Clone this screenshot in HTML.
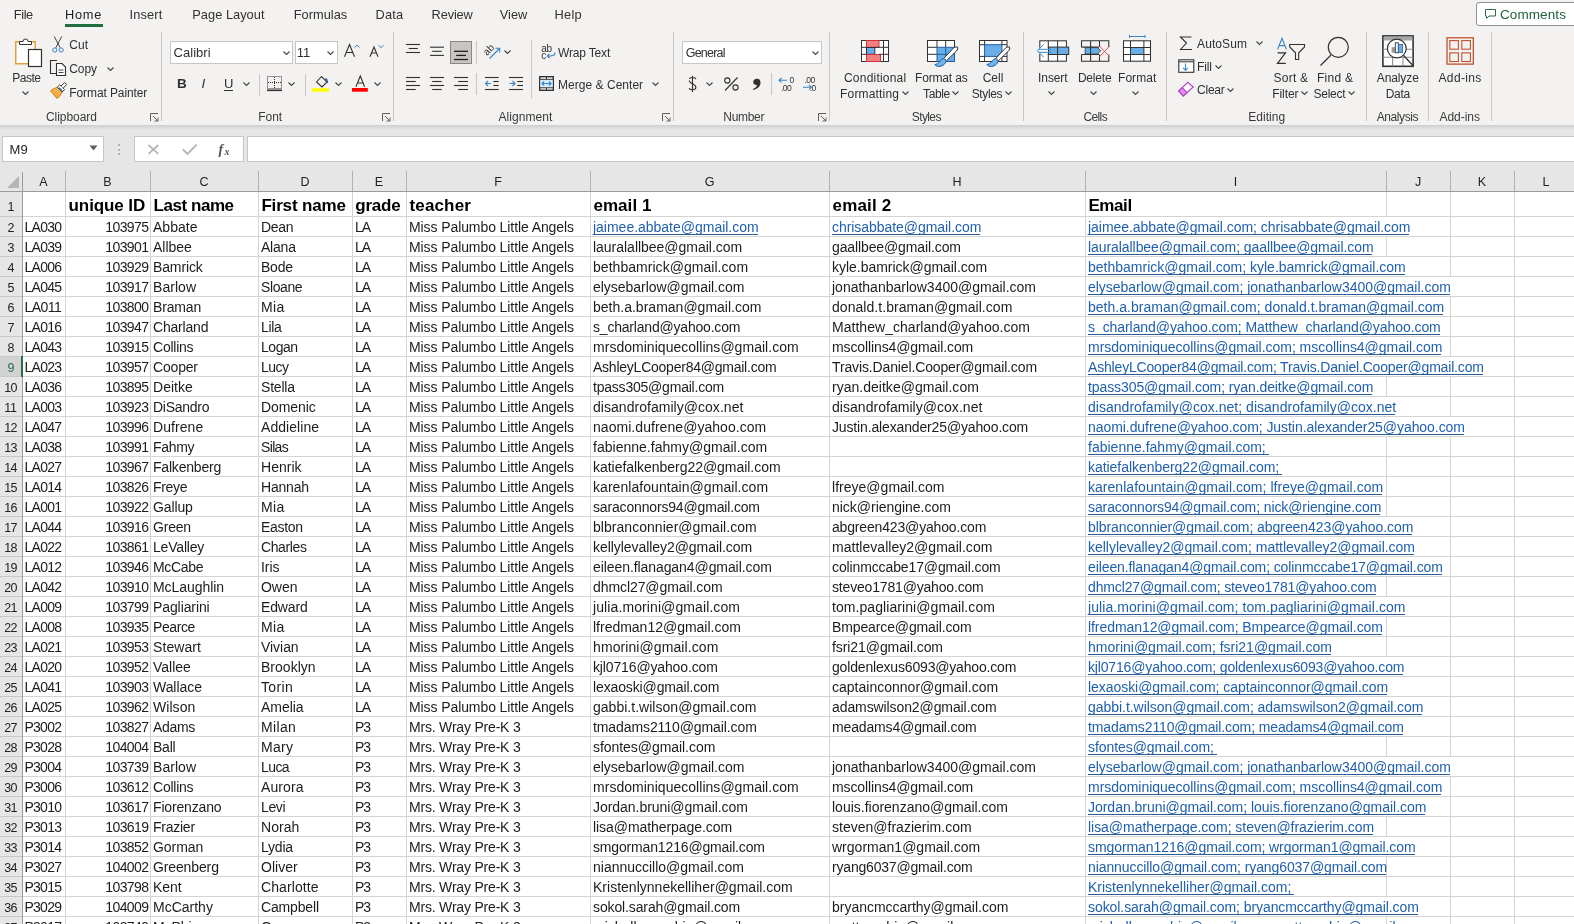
<!DOCTYPE html><html><head><meta charset="utf-8"><style>
html,body{margin:0;padding:0}
body{width:1574px;height:924px;overflow:hidden;position:relative;background:#fff;font-family:"Liberation Sans",sans-serif}
.t{position:absolute;white-space:nowrap}
.b{position:absolute}
svg.b{overflow:visible}
#wrap{position:absolute;left:0;top:0;width:1574px;height:924px;will-change:transform}
</style></head><body><div id="wrap">
<div class="b" style="left:0.00px;top:0.00px;width:1574.00px;height:125.00px;background:#f3f2f1;"></div>
<div class="t" style="left:13.70px;top:9.00px;font-size:12.80px;line-height:12.80px;color:#323130;letter-spacing:-0.356px;">File</div>
<div class="t" style="left:64.90px;top:9.00px;font-size:12.80px;line-height:12.80px;color:#1f1f1f;letter-spacing:0.764px;">Home</div>
<div class="t" style="left:129.50px;top:9.00px;font-size:12.80px;line-height:12.80px;color:#323130;letter-spacing:0.165px;">Insert</div>
<div class="t" style="left:192.30px;top:9.00px;font-size:12.80px;line-height:12.80px;color:#323130;letter-spacing:0.029px;">Page Layout</div>
<div class="t" style="left:293.70px;top:9.00px;font-size:12.80px;line-height:12.80px;color:#323130;letter-spacing:0.033px;">Formulas</div>
<div class="t" style="left:375.60px;top:9.00px;font-size:12.80px;line-height:12.80px;color:#323130;letter-spacing:0.166px;">Data</div>
<div class="t" style="left:431.60px;top:9.00px;font-size:12.80px;line-height:12.80px;color:#323130;letter-spacing:-0.145px;">Review</div>
<div class="t" style="left:499.70px;top:9.00px;font-size:12.80px;line-height:12.80px;color:#323130;letter-spacing:0.047px;">View</div>
<div class="t" style="left:554.40px;top:9.00px;font-size:12.80px;line-height:12.80px;color:#323130;letter-spacing:0.319px;">Help</div>
<div class="b" style="left:65.00px;top:24.00px;width:38.00px;height:3.00px;background:#1e6e42;"></div>
<div class="b" style="left:1476px;top:2px;width:110px;height:24px;box-sizing:border-box;border:1px solid #8f8f8f;border-radius:3px;background:#fff"></div>
<svg class="b" style="left:1484px;top:8px" width="13" height="12"><path d="M1.5,1.5 H11.5 V8 H5 L2.5,10.5 V8 H1.5 Z" fill="none" stroke="#2c6a48" stroke-width="1"/></svg>
<div class="t" style="left:1500.00px;top:8.00px;font-size:13.50px;line-height:13.50px;color:#22603e;letter-spacing:0.092px;">Comments</div>
<div class="b" style="left:161.00px;top:32.00px;width:1.00px;height:89.00px;background:#c8c6c4;"></div>
<div class="b" style="left:393.00px;top:32.00px;width:1.00px;height:89.00px;background:#c8c6c4;"></div>
<div class="b" style="left:673.00px;top:32.00px;width:1.00px;height:89.00px;background:#c8c6c4;"></div>
<div class="b" style="left:829.00px;top:32.00px;width:1.00px;height:89.00px;background:#c8c6c4;"></div>
<div class="b" style="left:1023.00px;top:32.00px;width:1.00px;height:89.00px;background:#c8c6c4;"></div>
<div class="b" style="left:1166.00px;top:32.00px;width:1.00px;height:89.00px;background:#c8c6c4;"></div>
<div class="b" style="left:1366.00px;top:32.00px;width:1.00px;height:89.00px;background:#c8c6c4;"></div>
<div class="b" style="left:1428.00px;top:32.00px;width:1.00px;height:89.00px;background:#c8c6c4;"></div>
<div class="b" style="left:1491.00px;top:32.00px;width:1.00px;height:89.00px;background:#c8c6c4;"></div>
<div class="t" style="left:46.00px;top:111.00px;font-size:12.00px;line-height:12.00px;color:#3b3a39;letter-spacing:-0.062px;">Clipboard</div>
<div class="t" style="left:258.20px;top:111.00px;font-size:12.00px;line-height:12.00px;color:#3b3a39;letter-spacing:-0.027px;">Font</div>
<div class="t" style="left:498.50px;top:111.00px;font-size:12.00px;line-height:12.00px;color:#3b3a39;letter-spacing:0.049px;">Alignment</div>
<div class="t" style="left:723.30px;top:111.00px;font-size:12.00px;line-height:12.00px;color:#3b3a39;letter-spacing:-0.296px;">Number</div>
<div class="t" style="left:911.80px;top:111.00px;font-size:12.00px;line-height:12.00px;color:#3b3a39;letter-spacing:-0.613px;">Styles</div>
<div class="t" style="left:1083.40px;top:111.00px;font-size:12.00px;line-height:12.00px;color:#3b3a39;letter-spacing:-0.594px;">Cells</div>
<div class="t" style="left:1248.20px;top:111.00px;font-size:12.00px;line-height:12.00px;color:#3b3a39;letter-spacing:0.044px;">Editing</div>
<div class="t" style="left:1376.80px;top:111.00px;font-size:12.00px;line-height:12.00px;color:#3b3a39;letter-spacing:-0.435px;">Analysis</div>
<div class="t" style="left:1439.50px;top:111.00px;font-size:12.00px;line-height:12.00px;color:#3b3a39;letter-spacing:-0.041px;">Add-ins</div>
<svg class="b" style="left:150px;top:113px" width="9" height="9"><path d="M0.5,8 V0.5 H8 M3,3 L8,8 M8,4.5 V8 H4.5" fill="none" stroke="#605e5c" stroke-width="1"/></svg>
<svg class="b" style="left:382px;top:113px" width="9" height="9"><path d="M0.5,8 V0.5 H8 M3,3 L8,8 M8,4.5 V8 H4.5" fill="none" stroke="#605e5c" stroke-width="1"/></svg>
<svg class="b" style="left:662px;top:113px" width="9" height="9"><path d="M0.5,8 V0.5 H8 M3,3 L8,8 M8,4.5 V8 H4.5" fill="none" stroke="#605e5c" stroke-width="1"/></svg>
<svg class="b" style="left:818px;top:113px" width="9" height="9"><path d="M0.5,8 V0.5 H8 M3,3 L8,8 M8,4.5 V8 H4.5" fill="none" stroke="#605e5c" stroke-width="1"/></svg>
<div class="t" style="left:12.30px;top:72.00px;font-size:12.00px;line-height:12.00px;color:#303030;letter-spacing:-0.497px;">Paste</div>
<div class="t" style="left:69.30px;top:39.00px;font-size:12.00px;line-height:12.00px;color:#303030;letter-spacing:0.076px;">Cut</div>
<div class="t" style="left:69.30px;top:63.00px;font-size:12.00px;line-height:12.00px;color:#303030;letter-spacing:-0.128px;">Copy</div>
<div class="t" style="left:69.30px;top:87.00px;font-size:12.00px;line-height:12.00px;color:#303030;letter-spacing:-0.104px;">Format Painter</div>
<svg class="b" style="left:21.5px;top:91.0px" width="8" height="5"><polyline points="0.5,0.5 3.5,3.5 6.5,0.5" fill="none" stroke="#444" stroke-width="1.1"/></svg>
<svg class="b" style="left:106.5px;top:66.5px" width="8" height="5"><polyline points="0.5,0.5 3.5,3.5 6.5,0.5" fill="none" stroke="#444" stroke-width="1.1"/></svg>
<div class="b" style="left:170.00px;top:41.00px;width:123.00px;height:23.00px;background:#fff;box-sizing:border-box;border:1px solid #c8c6c4;"></div>
<div class="t" style="left:173.60px;top:46.00px;font-size:13.00px;line-height:13.00px;color:#303030;letter-spacing:0.023px;">Calibri</div>
<svg class="b" style="left:282.5px;top:50.5px" width="8" height="5"><polyline points="0.5,0.5 3.5,3.5 6.5,0.5" fill="none" stroke="#444" stroke-width="1.1"/></svg>
<div class="b" style="left:295.00px;top:41.00px;width:43.00px;height:23.00px;background:#fff;box-sizing:border-box;border:1px solid #c8c6c4;"></div>
<div class="t" style="left:296.80px;top:46.00px;font-size:13.00px;line-height:13.00px;color:#303030;letter-spacing:-0.147px;">11</div>
<svg class="b" style="left:327.0px;top:50.5px" width="8" height="5"><polyline points="0.5,0.5 3.5,3.5 6.5,0.5" fill="none" stroke="#444" stroke-width="1.1"/></svg>
<div class="t" style="left:177.00px;top:77.00px;font-size:13.50px;line-height:13.50px;color:#303030;font-weight:bold;">B</div>
<div class="t" style="left:201.50px;top:77.00px;font-size:13.50px;line-height:13.50px;color:#303030;font-style:italic;font-family:"Liberation Serif",serif;">I</div>
<div class="t" style="left:224.00px;top:77.00px;font-size:13.00px;line-height:13.00px;color:#303030;">U</div>
<div class="b" style="left:224.00px;top:89.50px;width:9.00px;height:1.00px;background:#303030;"></div>
<svg class="b" style="left:242.7px;top:82.0px" width="8" height="5"><polyline points="0.5,0.5 3.5,3.5 6.5,0.5" fill="none" stroke="#444" stroke-width="1.1"/></svg>
<div class="b" style="left:259.00px;top:74.00px;width:1.00px;height:22.00px;background:#c8c6c4;"></div>
<div class="b" style="left:305.00px;top:74.00px;width:1.00px;height:22.00px;background:#c8c6c4;"></div>
<svg class="b" style="left:288.2px;top:82.0px" width="8" height="5"><polyline points="0.5,0.5 3.5,3.5 6.5,0.5" fill="none" stroke="#444" stroke-width="1.1"/></svg>
<svg class="b" style="left:334.7px;top:82.0px" width="8" height="5"><polyline points="0.5,0.5 3.5,3.5 6.5,0.5" fill="none" stroke="#444" stroke-width="1.1"/></svg>
<svg class="b" style="left:373.6px;top:82.0px" width="8" height="5"><polyline points="0.5,0.5 3.5,3.5 6.5,0.5" fill="none" stroke="#444" stroke-width="1.1"/></svg>
<div class="t" style="left:0.00px;top:-101.00px;font-size:1.00px;line-height:1.00px;color:#262626;">Number</div>
<div class="b" style="left:450.00px;top:41.00px;width:22.00px;height:23.00px;background:#c8c6c4;box-sizing:border-box;border:1px solid #8a8886;"></div>
<div class="b" style="left:476.00px;top:41.00px;width:1.00px;height:23.00px;background:#c8c6c4;"></div>
<div class="b" style="left:476.00px;top:73.00px;width:1.00px;height:22.00px;background:#c8c6c4;"></div>
<div class="b" style="left:531.00px;top:40.00px;width:1.00px;height:58.00px;background:#c8c6c4;"></div>
<div class="t" style="left:558.10px;top:47.00px;font-size:12.00px;line-height:12.00px;color:#303030;letter-spacing:-0.175px;">Wrap Text</div>
<div class="t" style="left:558.10px;top:79.00px;font-size:12.00px;line-height:12.00px;color:#303030;letter-spacing:0.022px;">Merge &amp; Center</div>
<svg class="b" style="left:652.4px;top:82.0px" width="8" height="5"><polyline points="0.5,0.5 3.5,3.5 6.5,0.5" fill="none" stroke="#444" stroke-width="1.1"/></svg>
<svg class="b" style="left:504.0px;top:50.0px" width="8" height="5"><polyline points="0.5,0.5 3.5,3.5 6.5,0.5" fill="none" stroke="#444" stroke-width="1.1"/></svg>
<div class="b" style="left:682.00px;top:41.00px;width:140.00px;height:23.00px;background:#fff;box-sizing:border-box;border:1px solid #c8c6c4;"></div>
<div class="t" style="left:685.70px;top:47.00px;font-size:12.50px;line-height:12.50px;color:#303030;letter-spacing:-0.781px;">General</div>
<svg class="b" style="left:811.6px;top:50.6px" width="8" height="5"><polyline points="0.5,0.5 3.5,3.5 6.5,0.5" fill="none" stroke="#444" stroke-width="1.1"/></svg>
<svg class="b" style="left:706.3px;top:82.0px" width="8" height="5"><polyline points="0.5,0.5 3.5,3.5 6.5,0.5" fill="none" stroke="#444" stroke-width="1.1"/></svg>
<div class="b" style="left:771.00px;top:73.00px;width:1.00px;height:22.00px;background:#c8c6c4;"></div>
<div class="t" style="left:844.00px;top:72.00px;font-size:12.00px;line-height:12.00px;color:#303030;letter-spacing:0.206px;">Conditional</div>
<div class="t" style="left:840.10px;top:88.00px;font-size:12.00px;line-height:12.00px;color:#303030;letter-spacing:0.165px;">Formatting</div>
<div class="t" style="left:915.00px;top:72.00px;font-size:12.00px;line-height:12.00px;color:#303030;letter-spacing:-0.168px;">Format as</div>
<div class="t" style="left:923.10px;top:88.00px;font-size:12.00px;line-height:12.00px;color:#303030;letter-spacing:-0.377px;">Table</div>
<div class="t" style="left:982.70px;top:72.00px;font-size:12.00px;line-height:12.00px;color:#303030;letter-spacing:-0.018px;">Cell</div>
<div class="t" style="left:971.70px;top:88.00px;font-size:12.00px;line-height:12.00px;color:#303030;letter-spacing:-0.363px;">Styles</div>
<svg class="b" style="left:902.0px;top:91.0px" width="8" height="5"><polyline points="0.5,0.5 3.5,3.5 6.5,0.5" fill="none" stroke="#444" stroke-width="1.1"/></svg>
<svg class="b" style="left:952.3px;top:91.0px" width="8" height="5"><polyline points="0.5,0.5 3.5,3.5 6.5,0.5" fill="none" stroke="#444" stroke-width="1.1"/></svg>
<svg class="b" style="left:1005.0px;top:91.0px" width="8" height="5"><polyline points="0.5,0.5 3.5,3.5 6.5,0.5" fill="none" stroke="#444" stroke-width="1.1"/></svg>
<div class="t" style="left:1038.10px;top:72.00px;font-size:12.00px;line-height:12.00px;color:#303030;letter-spacing:-0.102px;">Insert</div>
<div class="t" style="left:1077.90px;top:72.00px;font-size:12.00px;line-height:12.00px;color:#303030;letter-spacing:-0.198px;">Delete</div>
<div class="t" style="left:1118.00px;top:72.00px;font-size:12.00px;line-height:12.00px;color:#303030;letter-spacing:0.050px;">Format</div>
<svg class="b" style="left:1048.4px;top:91.0px" width="8" height="5"><polyline points="0.5,0.5 3.5,3.5 6.5,0.5" fill="none" stroke="#444" stroke-width="1.1"/></svg>
<svg class="b" style="left:1090.4px;top:91.0px" width="8" height="5"><polyline points="0.5,0.5 3.5,3.5 6.5,0.5" fill="none" stroke="#444" stroke-width="1.1"/></svg>
<svg class="b" style="left:1132.4px;top:91.0px" width="8" height="5"><polyline points="0.5,0.5 3.5,3.5 6.5,0.5" fill="none" stroke="#444" stroke-width="1.1"/></svg>
<div class="t" style="left:1197.10px;top:38.00px;font-size:12.00px;line-height:12.00px;color:#303030;letter-spacing:0.078px;">AutoSum</div>
<div class="t" style="left:1197.10px;top:61.00px;font-size:12.00px;line-height:12.00px;color:#303030;letter-spacing:-0.132px;">Fill</div>
<div class="t" style="left:1197.10px;top:84.00px;font-size:12.00px;line-height:12.00px;color:#303030;letter-spacing:-0.255px;">Clear</div>
<div class="t" style="left:1273.50px;top:72.00px;font-size:12.00px;line-height:12.00px;color:#303030;letter-spacing:0.242px;">Sort &amp;</div>
<div class="t" style="left:1272.20px;top:88.00px;font-size:12.00px;line-height:12.00px;color:#303030;letter-spacing:-0.061px;">Filter</div>
<div class="t" style="left:1316.90px;top:72.00px;font-size:12.00px;line-height:12.00px;color:#303030;letter-spacing:0.287px;">Find &amp;</div>
<div class="t" style="left:1313.50px;top:88.00px;font-size:12.00px;line-height:12.00px;color:#303030;letter-spacing:-0.258px;">Select</div>
<svg class="b" style="left:1256.4px;top:41.0px" width="8" height="5"><polyline points="0.5,0.5 3.5,3.5 6.5,0.5" fill="none" stroke="#444" stroke-width="1.1"/></svg>
<svg class="b" style="left:1214.8px;top:65.0px" width="8" height="5"><polyline points="0.5,0.5 3.5,3.5 6.5,0.5" fill="none" stroke="#444" stroke-width="1.1"/></svg>
<svg class="b" style="left:1227.0px;top:88.0px" width="8" height="5"><polyline points="0.5,0.5 3.5,3.5 6.5,0.5" fill="none" stroke="#444" stroke-width="1.1"/></svg>
<svg class="b" style="left:1301.0px;top:91.0px" width="8" height="5"><polyline points="0.5,0.5 3.5,3.5 6.5,0.5" fill="none" stroke="#444" stroke-width="1.1"/></svg>
<svg class="b" style="left:1347.8px;top:91.0px" width="8" height="5"><polyline points="0.5,0.5 3.5,3.5 6.5,0.5" fill="none" stroke="#444" stroke-width="1.1"/></svg>
<div class="t" style="left:1376.80px;top:72.00px;font-size:12.00px;line-height:12.00px;color:#303030;letter-spacing:-0.113px;">Analyze</div>
<div class="t" style="left:1385.80px;top:88.00px;font-size:12.00px;line-height:12.00px;color:#303030;letter-spacing:-0.362px;">Data</div>
<div class="t" style="left:1438.50px;top:72.00px;font-size:12.00px;line-height:12.00px;color:#303030;letter-spacing:0.359px;">Add-ins</div><svg class="b" style="left:0;top:0" width="1574" height="125" viewBox="0 0 1574 125">
<rect x="15.75" y="41.75" width="19.5" height="22" fill="#fff" stroke="#e0a040" stroke-width="1.5"/>
<path d="M19.5,44.5 V41.5 H23 A2.5,2.5 0 0 1 28,41.5 H31.5 V44.5 Z" fill="#fff" stroke="#323130" stroke-width="1"/>
<rect x="28.5" y="49.5" width="13" height="17" fill="#fff" stroke="#323130" stroke-width="1.2"/>
<path d="M54.3,36.5 L60.2,47.8 M61.7,36.5 L55.8,47.8" stroke="#323130" stroke-width="0.9" fill="none"/>
<circle cx="54.8" cy="50" r="2.1" fill="none" stroke="#3a85c6" stroke-width="1"/><circle cx="61.2" cy="50" r="2.1" fill="none" stroke="#3a85c6" stroke-width="1"/>
<path d="M57,60.5 H50.5 V73.5 H56" fill="none" stroke="#323130" stroke-width="1.1"/>
<path d="M56.5,63.5 H62 L65.5,67 V75.5 H56.5 Z" fill="#fff" stroke="#323130" stroke-width="1.1"/>
<path d="M58.5,70 H63.5 M58.5,72.5 H63.5" stroke="#323130" stroke-width="0.9"/>
<path d="M57.3,87.2 L62.2,92 Q60.5,95.8 57,98.2 L50.8,91 Q53.5,88.2 57.3,87.2 Z" fill="#f6b45a" stroke="#e0851c" stroke-width="1.1"/>
<path d="M54,91.5 L58.8,96" stroke="#e8962e" stroke-width="1"/>
<path d="M57.3,87.2 L59.8,84.8 L64.6,89.6 L62.2,92 Z" fill="#fff" stroke="#3a3a3a" stroke-width="1"/>
<path d="M59.2,87.6 L62.2,90.6" stroke="#2b5f9e" stroke-width="1.3"/>
<path d="M61,86 L64.8,82.6 L66.6,84.4 L63.2,88.2" fill="#fff" stroke="#3a3a3a" stroke-width="1"/>
<path d="M344.5,56.8 L349.5,44.5 L354.5,56.8 M346.5,52.5 H352.5" fill="none" stroke="#323130" stroke-width="1.1"/>
<path d="M354.5,47.5 L357,45.2 L359.5,47.5" fill="none" stroke="#3a85c6" stroke-width="1"/>
<path d="M370,56.8 L374,47 L378,56.8 M371.6,53 H376.4" fill="none" stroke="#323130" stroke-width="1.1"/>
<path d="M378.5,45.3 L381,47.6 L383.5,45.3" fill="none" stroke="#3a85c6" stroke-width="1"/>
<rect x="267.5" y="76.5" width="14" height="12" fill="none" stroke="#323130" stroke-width="1" stroke-dasharray="1,1"/>
<path d="M274.5,77 V88 M268,82.5 H281" stroke="#323130" stroke-width="1" stroke-dasharray="1,1"/>
<rect x="267" y="89.5" width="15" height="1.6" fill="#323130"/>
<path d="M316.5,82 L321.5,76.5 L327,82 L322,87 Z" fill="none" stroke="#323130" stroke-width="1.1"/>
<path d="M325,80 Q327,77 327.5,83" fill="none" stroke="#2b5f9e" stroke-width="1.3"/>
<rect x="311.7" y="88.3" width="17.2" height="3.4" fill="#ffff00"/>
<path d="M356,86.8 L360.3,76 L364.6,86.8 M357.6,83 H363" fill="none" stroke="#323130" stroke-width="1.1"/>
<rect x="352" y="88" width="15.8" height="3.7" fill="#ff0000"/>
<path d="M406.0,44.5 H420.0" stroke="#323130" stroke-width="1.1"/>
<path d="M408.7,48.5 H417.8" stroke="#323130" stroke-width="1.1"/>
<path d="M406.0,52.5 H420.0" stroke="#323130" stroke-width="1.1"/>
<path d="M430.0,47.2 H444.0" stroke="#323130" stroke-width="1.1"/>
<path d="M432.2,51.3 H441.7" stroke="#323130" stroke-width="1.1"/>
<path d="M430.0,55.4 H444.0" stroke="#323130" stroke-width="1.1"/>
<rect x="450.5" y="41.5" width="21" height="22" fill="#c8c6c4" stroke="#8a8886" stroke-width="1"/>
<path d="M454.0,51.3 H468.0" stroke="#201f1e" stroke-width="1.3"/>
<path d="M456.2,55.4 H466.0" stroke="#201f1e" stroke-width="1.3"/>
<path d="M454.0,59.5 H468.0" stroke="#201f1e" stroke-width="1.3"/>
<path d="M406.0,77.5 H420.0" stroke="#323130" stroke-width="1.1"/>
<path d="M406.0,81.5 H415.7" stroke="#323130" stroke-width="1.1"/>
<path d="M406.0,85.5 H420.0" stroke="#323130" stroke-width="1.1"/>
<path d="M406.0,89.5 H415.7" stroke="#323130" stroke-width="1.1"/>
<path d="M430.0,77.5 H444.0" stroke="#323130" stroke-width="1.1"/>
<path d="M432.2,81.5 H441.7" stroke="#323130" stroke-width="1.1"/>
<path d="M430.0,85.5 H444.0" stroke="#323130" stroke-width="1.1"/>
<path d="M432.2,89.5 H441.7" stroke="#323130" stroke-width="1.1"/>
<path d="M454.0,77.5 H468.0" stroke="#323130" stroke-width="1.1"/>
<path d="M458.2,81.5 H468.0" stroke="#323130" stroke-width="1.1"/>
<path d="M454.0,85.5 H468.0" stroke="#323130" stroke-width="1.1"/>
<path d="M458.2,89.5 H468.0" stroke="#323130" stroke-width="1.1"/>
<path d="M485.0,77.5 H498.7" stroke="#323130" stroke-width="1.1"/>
<path d="M493.3,81.5 H498.7" stroke="#323130" stroke-width="1.1"/>
<path d="M493.3,85.5 H498.7" stroke="#323130" stroke-width="1.1"/>
<path d="M485.0,89.5 H498.7" stroke="#323130" stroke-width="1.1"/>
<path d="M509.0,77.5 H523.0" stroke="#323130" stroke-width="1.1"/>
<path d="M517.3,81.5 H523.0" stroke="#323130" stroke-width="1.1"/>
<path d="M517.3,85.5 H523.0" stroke="#323130" stroke-width="1.1"/>
<path d="M509.0,89.5 H523.0" stroke="#323130" stroke-width="1.1"/>
<path d="M485.5,83.5 H491 M488,81 L485.5,83.5 L488,86" fill="none" stroke="#3a85c6" stroke-width="1.1"/>
<path d="M509.5,83.5 H515 M512.5,81 L515,83.5 L512.5,86" fill="none" stroke="#3a85c6" stroke-width="1.1"/>
<text x="0" y="0" transform="translate(487,56) rotate(-45)" font-family="Liberation Sans" font-size="10" fill="#323130">ab</text>
<path d="M489.5,58.5 L499.5,48.5 M495.5,48.3 H499.7 V52.5" fill="none" stroke="#3a85c6" stroke-width="1.1"/>
<text x="541.3" y="51.5" font-family="Liberation Sans" font-size="10" fill="#323130" letter-spacing="-0.3">ab</text>
<text x="541.3" y="58.5" font-family="Liberation Sans" font-size="10" fill="#323130">c</text>
<path d="M555,52.5 Q555,56 550,56 H547.5 M549.5,54 L547.3,56 L549.5,58" fill="none" stroke="#3a85c6" stroke-width="1.2"/>
<rect x="539.7" y="76.7" width="13.6" height="13.6" fill="#fff" stroke="#323130" stroke-width="1.4"/>
<rect x="540.4" y="79.3" width="12.2" height="8.5" fill="#d4ebfa"/>
<path d="M540,79.3 H553 M540,87.8 H553 M546.5,77 V79.3 M546.5,87.8 V90" stroke="#323130" stroke-width="1"/>
<path d="M542,83.5 H551 M544,81.5 L542,83.5 L544,85.5 M549,81.5 L551,83.5 L549,85.5" fill="none" stroke="#3a85c6" stroke-width="1.1"/>
<text x="789.5" y="82.8" font-family="Liberation Sans" font-size="8.5" fill="#323130">0</text>
<text x="781" y="91.2" font-family="Liberation Sans" font-size="8.5" fill="#323130" letter-spacing="-0.6">.00</text>
<path d="M779,80.3 H787 M781.5,78 L779,80.3 L781.5,82.6" fill="none" stroke="#3a85c6" stroke-width="1.1"/>
<text x="804.5" y="82.8" font-family="Liberation Sans" font-size="8.5" fill="#323130" letter-spacing="-0.6">.00</text>
<text x="809.8" y="91.2" font-family="Liberation Sans" font-size="8.5" fill="#323130" letter-spacing="-0.6">.0</text>
<path d="M803,87.3 H811.5 M809,85 L811.5,87.3 L809,89.6" fill="none" stroke="#3a85c6" stroke-width="1.1"/>
<path d="M756.8,78.8 C759.5,78.6 760.8,80.8 760.5,83.2 C760.2,86.6 757.5,89 753,89.8 L752.7,89 C755.3,88 756.8,86.6 757,85 C754.8,85.3 753.2,83.8 753.2,82 C753.2,80.2 754.8,78.9 756.8,78.8 Z" fill="#323130"/>
<path d="M689.5,79 C689.5,77 695.5,76.8 695.8,79.2 M689.3,88 C689.5,90.5 695.7,90.5 695.9,87.5 C696,83.5 689.3,84.2 689.3,80.5 M692.5,75.8 V92" fill="none" stroke="#323130" stroke-width="1.1"/>
<path d="M725,90.5 L737.5,77.5" stroke="#323130" stroke-width="1.1"/><circle cx="727.3" cy="80.5" r="2.6" fill="none" stroke="#323130" stroke-width="1.1"/><circle cx="735.5" cy="87.5" r="2.6" fill="none" stroke="#323130" stroke-width="1.1"/>
<rect x="861.5" y="40.5" width="27" height="21" fill="#fff" stroke="#323130" stroke-width="1"/>
<rect x="866.5" y="40.5" width="12.5" height="6.8" fill="#f47f7f" stroke="#d13438" stroke-width="1"/>
<rect x="866.5" y="47.5" width="8.3" height="6.8" fill="#6aaee8" stroke="#323130" stroke-width="1"/>
<rect x="866.5" y="54.5" width="14" height="7" fill="#f47f7f" stroke="#d13438" stroke-width="1"/>
<path d="M883.5,40.5 V61.5 M874.8,47.3 H888.5 M879,54.3 H888.5 M861.5,47.3 H866.5 M861.5,54.3 H866.5" stroke="#323130" stroke-width="1" fill="none"/>
<rect x="927.5" y="40.5" width="27" height="21" fill="#fff" stroke="#323130" stroke-width="1"/>
<rect x="937" y="47.3" width="17.5" height="14.2" fill="#6aaee8"/>
<path d="M937,40.5 V47.3 M945.7,40.5 V47.3 M927.5,47.3 H937 M927.5,54.3 H937" stroke="#323130" stroke-width="1" fill="none"/>
<path d="M937,47.3 V61.5 M945.7,47.3 V61.5 M937,47.3 H954.5 M937,54.3 H954.5 M954.5,47.3 V61.5 M937,61.5 H954.5" stroke="#1f5f9f" stroke-width="1" fill="none"/>
<path d="M957.5,47 Q955.0,46.5 953.5,48 L943.8,58.4 L946.3,60.9 L956.5,51 Q958.5,49 957.5,47 Z" fill="#fff" stroke="#333" stroke-width="1"/>
<path d="M943.8,58.4 L946.3,60.9 Q945.0,65.5 939.5,66.5 Q936.5,66.7 934.8,64.6 Q938.0,64.2 939.8,61.5 Q941.2,59 943.8,58.4 Z" fill="#70b4ec" stroke="#1f5f9f" stroke-width="1"/>
<rect x="979.5" y="40.5" width="27.5" height="21" fill="#fff" stroke="#323130" stroke-width="1"/>
<rect x="984.6" y="44.7" width="17.3" height="11.7" fill="#6aaee8" stroke="#1f5f9f" stroke-width="1"/>
<path d="M984.6,40.5 V44.7 M1001.9,40.5 V44.7 M984.6,56.4 V61.5 M1001.9,56.4 V61.5 M979.5,44.7 H984.6 M979.5,56.4 H984.6 M1001.9,44.7 H1007 M1001.9,56.4 H1007" stroke="#323130" stroke-width="1"/>
<path d="M1009.5,47 Q1007.0,46.5 1005.5,48 L995.8,58.4 L998.3,60.9 L1008.5,51 Q1010.5,49 1009.5,47 Z" fill="#fff" stroke="#333" stroke-width="1"/>
<path d="M995.8,58.4 L998.3,60.9 Q997.0,65.5 991.5,66.5 Q988.5,66.7 986.8,64.6 Q990.0,64.2 991.8,61.5 Q993.2,59 995.8,58.4 Z" fill="#70b4ec" stroke="#1f5f9f" stroke-width="1"/>
<rect x="1039.8" y="40.8" width="26.6" height="20.4" fill="#fff" stroke="#323130" stroke-width="1.05"/>
<rect x="1048.3" y="47.1" width="20.4" height="7.4" fill="#6aaee8" stroke="#323130" stroke-width="1"/>
<path d="M1048.3,40.8 V61.2 M1057.6,40.8 V61.2" stroke="#323130" stroke-width="1"/>
<rect x="1038" y="47.8" width="10" height="6" fill="#fff"/>
<path d="M1043.5,44.5 L1037.5,50.8 L1043.5,57 M1038.5,49.3 H1051 M1038.5,52.3 H1051" fill="none" stroke="#3a85c6" stroke-width="1"/>
<path d="M1081.5,47.1 V40.8 H1108.8 V47.1 M1081.5,54.5 V61.2 H1108.8 V54.5 M1081.5,47.1 H1099 M1081.5,54.5 H1099 M1090.6,40.8 V47.1 M1090.6,54.5 V61.2 M1099.5,40.8 V47.1 M1099.5,54.5 V61.2" fill="none" stroke="#323130" stroke-width="1.05"/>
<path d="M1085.2,47.6 H1097.5 L1100.7,50.8 L1097.5,54 H1085.2 Z" fill="#6aaee8" stroke="#323130" stroke-width="0.8"/>
<path d="M1090.6,47.6 V54" stroke="#323130" stroke-width="1"/>
<path d="M1099.5,46 L1109.6,56.8 M1109.6,46 L1099.5,56.8" stroke="#e8505b" stroke-width="1"/>
<rect x="1123.5" y="40.8" width="27" height="20.4" fill="#fff" stroke="#323130" stroke-width="1.05"/>
<rect x="1130.5" y="47.5" width="13.4" height="7" fill="#6aaee8"/>
<path d="M1130.5,40.8 V61.2 M1143.9,40.8 V61.2 M1123.5,47.5 H1150.5 M1123.5,54.5 H1150.5" stroke="#323130" stroke-width="1"/>
<path d="M1129.5,36.5 H1145 M1129.5,35 V38 M1145,35 V38" stroke="#3a85c6" stroke-width="1"/>
<path d="M1191.5,37 H1180.5 L1186.5,43 L1180.5,49.5 H1192" fill="none" stroke="#323130" stroke-width="1.1"/>
<rect x="1178.8" y="59.8" width="15" height="12.5" fill="#fff" stroke="#323130" stroke-width="1.1"/>
<path d="M1179,61.8 H1193.5" stroke="#323130" stroke-width="1"/>
<path d="M1185.5,63.5 V70.3 M1183,67.8 L1185.5,70.3 L1188,67.8" fill="none" stroke="#3a85c6" stroke-width="1.1"/>
<path d="M1178.8,91 L1187.8,82.2 L1193.2,87 L1183.2,96 Z" fill="#fff" stroke="#b146c2" stroke-width="1.2"/>
<path d="M1178.8,91 L1182.3,87.6 L1187,92.6 L1183.2,96 Z" fill="#e58ef0" stroke="#b146c2" stroke-width="1.2"/>
<path d="M1277.6,49.4 L1282,38.3 L1286.4,49.4 M1279.2,45.6 H1284.8" fill="none" stroke="#3a85c6" stroke-width="1.2"/>
<path d="M1277.5,52.8 H1285.5 L1277.5,63.3 H1285.8" fill="none" stroke="#323130" stroke-width="1.2"/>
<path d="M1289.7,44.5 H1304.5 V47 L1298.7,52.8 V59.5 H1295.5 V52.8 L1289.7,47 Z" fill="none" stroke="#323130" stroke-width="1.1"/>
<circle cx="1338.3" cy="47.3" r="10" fill="none" stroke="#323130" stroke-width="1.2"/>
<path d="M1331,55 L1320.5,65.5" stroke="#323130" stroke-width="1.2"/>
<rect x="1382.9" y="35.9" width="30.2" height="30.4" fill="#fff" stroke="#323130" stroke-width="1.6"/>
<rect x="1383.8" y="36.5" width="28.6" height="4" fill="#a6a6a6"/>
<path d="M1383,49.2 H1413 M1383,57.3 H1413 M1392.6,57 V66 M1403,57 V66" stroke="#8f8f8f" stroke-width="1.1"/>
<circle cx="1396.8" cy="48.5" r="9.4" fill="#fff" stroke="#323130" stroke-width="1.2"/>
<path d="M1403.6,55.5 L1413.6,66.3" stroke="#323130" stroke-width="1.3"/>
<rect x="1391.6" y="47.2" width="3.5" height="5.5" fill="#9a9a9a"/>
<rect x="1395.3" y="42.8" width="3" height="9.9" fill="#fff" stroke="#323130" stroke-width="0.9"/>
<rect x="1398.6" y="44.5" width="4" height="8.2" fill="#6aaee8" stroke="#2b5f9e" stroke-width="0.8"/>
<rect x="1447" y="37.8" width="26.3" height="26.3" fill="none" stroke="#c0502e" stroke-width="1.3"/>
<rect x="1449.8" y="40.6" width="8.6" height="8.6" fill="none" stroke="#c0502e" stroke-width="1.1"/>
<rect x="1449.8" y="52.9" width="8.6" height="8.6" fill="none" stroke="#c0502e" stroke-width="1.1"/>
<rect x="1461.8" y="40.6" width="8.6" height="8.6" fill="none" stroke="#c0502e" stroke-width="1.1"/>
<rect x="1461.8" y="52.9" width="8.6" height="8.6" fill="none" stroke="#c0502e" stroke-width="1.1"/>
</svg><div class="b" style="left:0.00px;top:125.00px;width:1574.00px;height:47.00px;background:#e6e6e6;"></div>
<div class="b" style="left:0;top:125px;width:1574px;height:5px;background:linear-gradient(#cfcfcf,#e6e6e6)"></div>
<div class="b" style="left:2.00px;top:136.00px;width:102.00px;height:26.00px;background:#fff;box-sizing:border-box;border:1px solid #c6c6c6;"></div>
<div class="t" style="left:9.60px;top:143.00px;font-size:13.00px;line-height:13.00px;color:#262626;letter-spacing:-0.029px;">M9</div>
<svg class="b" style="left:89px;top:145px" width="9" height="6"><polygon points="0.5,0.5 8.5,0.5 4.5,5.5" fill="#605e5c"/></svg>
<div class="b" style="left:118.00px;top:144.00px;width:2.00px;height:2.00px;background:#b4b4b4;"></div>
<div class="b" style="left:118.00px;top:148.50px;width:2.00px;height:2.00px;background:#b4b4b4;"></div>
<div class="b" style="left:118.00px;top:153.00px;width:2.00px;height:2.00px;background:#b4b4b4;"></div>
<div class="b" style="left:134.00px;top:136.00px;width:110.00px;height:26.00px;background:#fff;box-sizing:border-box;border:1px solid #c6c6c6;"></div>
<div class="b" style="left:247.00px;top:136.00px;width:1400.00px;height:26.00px;background:#fff;box-sizing:border-box;border:1px solid #c6c6c6;"></div>
<svg class="b" style="left:0;top:125px" width="260" height="47" viewBox="0 125 260 47"><path d="M148.5,145 L158.3,153.8 M158.3,145 L148.5,153.8" stroke="#b4b4b4" stroke-width="1.7"/><path d="M182.8,149.3 L187.5,154 L196.6,144.6" fill="none" stroke="#b4b4b4" stroke-width="1.9"/><text x="218.5" y="153.5" font-family="Liberation Serif" font-style="italic" font-weight="bold" font-size="14" fill="#555">f</text><text x="224.5" y="154.5" font-family="Liberation Serif" font-style="italic" font-weight="bold" font-size="10" fill="#555">x</text></svg><div class="b" style="left:0.00px;top:172.00px;width:1574.00px;height:19.00px;background:#e6e6e6;"></div>
<div class="b" style="left:0.00px;top:191.00px;width:22.00px;height:733.00px;background:#e6e6e6;"></div>
<div class="b" style="left:23.00px;top:192.00px;width:1551.00px;height:732.00px;background:#fff;"></div>
<div class="b" style="left:23.00px;top:216.00px;width:1551.00px;height:1.00px;background:#d4d4d4;"></div>
<div class="b" style="left:0.00px;top:216.00px;width:22.00px;height:1.00px;background:#c8c8c8;"></div>
<div class="b" style="left:23.00px;top:236.00px;width:1551.00px;height:1.00px;background:#d4d4d4;"></div>
<div class="b" style="left:0.00px;top:236.00px;width:22.00px;height:1.00px;background:#c8c8c8;"></div>
<div class="b" style="left:23.00px;top:256.00px;width:1551.00px;height:1.00px;background:#d4d4d4;"></div>
<div class="b" style="left:0.00px;top:256.00px;width:22.00px;height:1.00px;background:#c8c8c8;"></div>
<div class="b" style="left:23.00px;top:276.00px;width:1551.00px;height:1.00px;background:#d4d4d4;"></div>
<div class="b" style="left:0.00px;top:276.00px;width:22.00px;height:1.00px;background:#c8c8c8;"></div>
<div class="b" style="left:23.00px;top:296.00px;width:1551.00px;height:1.00px;background:#d4d4d4;"></div>
<div class="b" style="left:0.00px;top:296.00px;width:22.00px;height:1.00px;background:#c8c8c8;"></div>
<div class="b" style="left:23.00px;top:316.00px;width:1551.00px;height:1.00px;background:#d4d4d4;"></div>
<div class="b" style="left:0.00px;top:316.00px;width:22.00px;height:1.00px;background:#c8c8c8;"></div>
<div class="b" style="left:23.00px;top:336.00px;width:1551.00px;height:1.00px;background:#d4d4d4;"></div>
<div class="b" style="left:0.00px;top:336.00px;width:22.00px;height:1.00px;background:#c8c8c8;"></div>
<div class="b" style="left:23.00px;top:356.00px;width:1551.00px;height:1.00px;background:#d4d4d4;"></div>
<div class="b" style="left:0.00px;top:356.00px;width:22.00px;height:1.00px;background:#c8c8c8;"></div>
<div class="b" style="left:23.00px;top:376.00px;width:1551.00px;height:1.00px;background:#d4d4d4;"></div>
<div class="b" style="left:0.00px;top:376.00px;width:22.00px;height:1.00px;background:#c8c8c8;"></div>
<div class="b" style="left:23.00px;top:396.00px;width:1551.00px;height:1.00px;background:#d4d4d4;"></div>
<div class="b" style="left:0.00px;top:396.00px;width:22.00px;height:1.00px;background:#c8c8c8;"></div>
<div class="b" style="left:23.00px;top:416.00px;width:1551.00px;height:1.00px;background:#d4d4d4;"></div>
<div class="b" style="left:0.00px;top:416.00px;width:22.00px;height:1.00px;background:#c8c8c8;"></div>
<div class="b" style="left:23.00px;top:436.00px;width:1551.00px;height:1.00px;background:#d4d4d4;"></div>
<div class="b" style="left:0.00px;top:436.00px;width:22.00px;height:1.00px;background:#c8c8c8;"></div>
<div class="b" style="left:23.00px;top:456.00px;width:1551.00px;height:1.00px;background:#d4d4d4;"></div>
<div class="b" style="left:0.00px;top:456.00px;width:22.00px;height:1.00px;background:#c8c8c8;"></div>
<div class="b" style="left:23.00px;top:476.00px;width:1551.00px;height:1.00px;background:#d4d4d4;"></div>
<div class="b" style="left:0.00px;top:476.00px;width:22.00px;height:1.00px;background:#c8c8c8;"></div>
<div class="b" style="left:23.00px;top:496.00px;width:1551.00px;height:1.00px;background:#d4d4d4;"></div>
<div class="b" style="left:0.00px;top:496.00px;width:22.00px;height:1.00px;background:#c8c8c8;"></div>
<div class="b" style="left:23.00px;top:516.00px;width:1551.00px;height:1.00px;background:#d4d4d4;"></div>
<div class="b" style="left:0.00px;top:516.00px;width:22.00px;height:1.00px;background:#c8c8c8;"></div>
<div class="b" style="left:23.00px;top:536.00px;width:1551.00px;height:1.00px;background:#d4d4d4;"></div>
<div class="b" style="left:0.00px;top:536.00px;width:22.00px;height:1.00px;background:#c8c8c8;"></div>
<div class="b" style="left:23.00px;top:556.00px;width:1551.00px;height:1.00px;background:#d4d4d4;"></div>
<div class="b" style="left:0.00px;top:556.00px;width:22.00px;height:1.00px;background:#c8c8c8;"></div>
<div class="b" style="left:23.00px;top:576.00px;width:1551.00px;height:1.00px;background:#d4d4d4;"></div>
<div class="b" style="left:0.00px;top:576.00px;width:22.00px;height:1.00px;background:#c8c8c8;"></div>
<div class="b" style="left:23.00px;top:596.00px;width:1551.00px;height:1.00px;background:#d4d4d4;"></div>
<div class="b" style="left:0.00px;top:596.00px;width:22.00px;height:1.00px;background:#c8c8c8;"></div>
<div class="b" style="left:23.00px;top:616.00px;width:1551.00px;height:1.00px;background:#d4d4d4;"></div>
<div class="b" style="left:0.00px;top:616.00px;width:22.00px;height:1.00px;background:#c8c8c8;"></div>
<div class="b" style="left:23.00px;top:636.00px;width:1551.00px;height:1.00px;background:#d4d4d4;"></div>
<div class="b" style="left:0.00px;top:636.00px;width:22.00px;height:1.00px;background:#c8c8c8;"></div>
<div class="b" style="left:23.00px;top:656.00px;width:1551.00px;height:1.00px;background:#d4d4d4;"></div>
<div class="b" style="left:0.00px;top:656.00px;width:22.00px;height:1.00px;background:#c8c8c8;"></div>
<div class="b" style="left:23.00px;top:676.00px;width:1551.00px;height:1.00px;background:#d4d4d4;"></div>
<div class="b" style="left:0.00px;top:676.00px;width:22.00px;height:1.00px;background:#c8c8c8;"></div>
<div class="b" style="left:23.00px;top:696.00px;width:1551.00px;height:1.00px;background:#d4d4d4;"></div>
<div class="b" style="left:0.00px;top:696.00px;width:22.00px;height:1.00px;background:#c8c8c8;"></div>
<div class="b" style="left:23.00px;top:716.00px;width:1551.00px;height:1.00px;background:#d4d4d4;"></div>
<div class="b" style="left:0.00px;top:716.00px;width:22.00px;height:1.00px;background:#c8c8c8;"></div>
<div class="b" style="left:23.00px;top:736.00px;width:1551.00px;height:1.00px;background:#d4d4d4;"></div>
<div class="b" style="left:0.00px;top:736.00px;width:22.00px;height:1.00px;background:#c8c8c8;"></div>
<div class="b" style="left:23.00px;top:756.00px;width:1551.00px;height:1.00px;background:#d4d4d4;"></div>
<div class="b" style="left:0.00px;top:756.00px;width:22.00px;height:1.00px;background:#c8c8c8;"></div>
<div class="b" style="left:23.00px;top:776.00px;width:1551.00px;height:1.00px;background:#d4d4d4;"></div>
<div class="b" style="left:0.00px;top:776.00px;width:22.00px;height:1.00px;background:#c8c8c8;"></div>
<div class="b" style="left:23.00px;top:796.00px;width:1551.00px;height:1.00px;background:#d4d4d4;"></div>
<div class="b" style="left:0.00px;top:796.00px;width:22.00px;height:1.00px;background:#c8c8c8;"></div>
<div class="b" style="left:23.00px;top:816.00px;width:1551.00px;height:1.00px;background:#d4d4d4;"></div>
<div class="b" style="left:0.00px;top:816.00px;width:22.00px;height:1.00px;background:#c8c8c8;"></div>
<div class="b" style="left:23.00px;top:836.00px;width:1551.00px;height:1.00px;background:#d4d4d4;"></div>
<div class="b" style="left:0.00px;top:836.00px;width:22.00px;height:1.00px;background:#c8c8c8;"></div>
<div class="b" style="left:23.00px;top:856.00px;width:1551.00px;height:1.00px;background:#d4d4d4;"></div>
<div class="b" style="left:0.00px;top:856.00px;width:22.00px;height:1.00px;background:#c8c8c8;"></div>
<div class="b" style="left:23.00px;top:876.00px;width:1551.00px;height:1.00px;background:#d4d4d4;"></div>
<div class="b" style="left:0.00px;top:876.00px;width:22.00px;height:1.00px;background:#c8c8c8;"></div>
<div class="b" style="left:23.00px;top:896.00px;width:1551.00px;height:1.00px;background:#d4d4d4;"></div>
<div class="b" style="left:0.00px;top:896.00px;width:22.00px;height:1.00px;background:#c8c8c8;"></div>
<div class="b" style="left:23.00px;top:916.00px;width:1551.00px;height:1.00px;background:#d4d4d4;"></div>
<div class="b" style="left:0.00px;top:916.00px;width:22.00px;height:1.00px;background:#c8c8c8;"></div>
<div class="b" style="left:65.00px;top:192.00px;width:1.00px;height:732.00px;background:#d4d4d4;"></div>
<div class="b" style="left:65.00px;top:171.00px;width:1.00px;height:20.00px;background:#b2b2b2;"></div>
<div class="b" style="left:150.00px;top:192.00px;width:1.00px;height:732.00px;background:#d4d4d4;"></div>
<div class="b" style="left:150.00px;top:171.00px;width:1.00px;height:20.00px;background:#b2b2b2;"></div>
<div class="b" style="left:258.00px;top:192.00px;width:1.00px;height:732.00px;background:#d4d4d4;"></div>
<div class="b" style="left:258.00px;top:171.00px;width:1.00px;height:20.00px;background:#b2b2b2;"></div>
<div class="b" style="left:352.00px;top:192.00px;width:1.00px;height:732.00px;background:#d4d4d4;"></div>
<div class="b" style="left:352.00px;top:171.00px;width:1.00px;height:20.00px;background:#b2b2b2;"></div>
<div class="b" style="left:406.00px;top:192.00px;width:1.00px;height:732.00px;background:#d4d4d4;"></div>
<div class="b" style="left:406.00px;top:171.00px;width:1.00px;height:20.00px;background:#b2b2b2;"></div>
<div class="b" style="left:590.00px;top:192.00px;width:1.00px;height:732.00px;background:#d4d4d4;"></div>
<div class="b" style="left:590.00px;top:171.00px;width:1.00px;height:20.00px;background:#b2b2b2;"></div>
<div class="b" style="left:829.00px;top:192.00px;width:1.00px;height:732.00px;background:#d4d4d4;"></div>
<div class="b" style="left:829.00px;top:171.00px;width:1.00px;height:20.00px;background:#b2b2b2;"></div>
<div class="b" style="left:1085.00px;top:192.00px;width:1.00px;height:732.00px;background:#d4d4d4;"></div>
<div class="b" style="left:1085.00px;top:171.00px;width:1.00px;height:20.00px;background:#b2b2b2;"></div>
<div class="b" style="left:1386.00px;top:192.00px;width:1.00px;height:732.00px;background:#d4d4d4;"></div>
<div class="b" style="left:1386.00px;top:171.00px;width:1.00px;height:20.00px;background:#b2b2b2;"></div>
<div class="b" style="left:1450.00px;top:192.00px;width:1.00px;height:732.00px;background:#d4d4d4;"></div>
<div class="b" style="left:1450.00px;top:171.00px;width:1.00px;height:20.00px;background:#b2b2b2;"></div>
<div class="b" style="left:1514.00px;top:192.00px;width:1.00px;height:732.00px;background:#d4d4d4;"></div>
<div class="b" style="left:1514.00px;top:171.00px;width:1.00px;height:20.00px;background:#b2b2b2;"></div>
<div class="b" style="left:0.00px;top:191.00px;width:1574.00px;height:1.00px;background:#9b9b9b;"></div>
<div class="b" style="left:22.00px;top:172.00px;width:1.00px;height:752.00px;background:#9b9b9b;"></div>
<div class="b" style="left:1386.00px;top:217.00px;width:1.00px;height:19.00px;background:#fff;"></div>
<div class="b" style="left:1386.00px;top:257.00px;width:1.00px;height:19.00px;background:#fff;"></div>
<div class="b" style="left:1386.00px;top:277.00px;width:1.00px;height:19.00px;background:#fff;"></div>
<div class="b" style="left:1386.00px;top:297.00px;width:1.00px;height:19.00px;background:#fff;"></div>
<div class="b" style="left:1386.00px;top:317.00px;width:1.00px;height:19.00px;background:#fff;"></div>
<div class="b" style="left:1386.00px;top:337.00px;width:1.00px;height:19.00px;background:#fff;"></div>
<div class="b" style="left:1386.00px;top:357.00px;width:1.00px;height:19.00px;background:#fff;"></div>
<div class="b" style="left:1386.00px;top:397.00px;width:1.00px;height:19.00px;background:#fff;"></div>
<div class="b" style="left:1386.00px;top:417.00px;width:1.00px;height:19.00px;background:#fff;"></div>
<div class="b" style="left:1386.00px;top:517.00px;width:1.00px;height:19.00px;background:#fff;"></div>
<div class="b" style="left:1386.00px;top:537.00px;width:1.00px;height:19.00px;background:#fff;"></div>
<div class="b" style="left:1386.00px;top:557.00px;width:1.00px;height:19.00px;background:#fff;"></div>
<div class="b" style="left:1386.00px;top:597.00px;width:1.00px;height:19.00px;background:#fff;"></div>
<div class="b" style="left:1386.00px;top:657.00px;width:1.00px;height:19.00px;background:#fff;"></div>
<div class="b" style="left:1386.00px;top:677.00px;width:1.00px;height:19.00px;background:#fff;"></div>
<div class="b" style="left:1386.00px;top:697.00px;width:1.00px;height:19.00px;background:#fff;"></div>
<div class="b" style="left:1386.00px;top:717.00px;width:1.00px;height:19.00px;background:#fff;"></div>
<div class="b" style="left:1386.00px;top:757.00px;width:1.00px;height:19.00px;background:#fff;"></div>
<div class="b" style="left:1386.00px;top:777.00px;width:1.00px;height:19.00px;background:#fff;"></div>
<div class="b" style="left:1386.00px;top:797.00px;width:1.00px;height:19.00px;background:#fff;"></div>
<div class="b" style="left:1386.00px;top:837.00px;width:1.00px;height:19.00px;background:#fff;"></div>
<div class="b" style="left:1386.00px;top:897.00px;width:1.00px;height:19.00px;background:#fff;"></div>
<div class="b" style="left:1450.00px;top:357.00px;width:1.00px;height:19.00px;background:#fff;"></div>
<div class="b" style="left:1450.00px;top:757.00px;width:1.00px;height:19.00px;background:#fff;"></div>
<div class="b" style="left:1450.00px;top:417.00px;width:1.00px;height:19.00px;background:#fff;"></div>
<div class="b" style="left:1450.00px;top:277.00px;width:1.00px;height:19.00px;background:#fff;"></div>
<svg class="b" style="left:0;top:172px" width="22" height="19"><polygon points="19,4 19,16 7,16" fill="#b5b5b5"/></svg>
<div class="t" style="left:39.33px;top:176.00px;font-size:12.50px;line-height:12.50px;color:#222;">A</div>
<div class="t" style="left:103.33px;top:176.00px;font-size:12.50px;line-height:12.50px;color:#222;">B</div>
<div class="t" style="left:199.49px;top:176.00px;font-size:12.50px;line-height:12.50px;color:#222;">C</div>
<div class="t" style="left:300.49px;top:176.00px;font-size:12.50px;line-height:12.50px;color:#222;">D</div>
<div class="t" style="left:374.83px;top:176.00px;font-size:12.50px;line-height:12.50px;color:#222;">E</div>
<div class="t" style="left:494.18px;top:176.00px;font-size:12.50px;line-height:12.50px;color:#222;">F</div>
<div class="t" style="left:704.64px;top:176.00px;font-size:12.50px;line-height:12.50px;color:#222;">G</div>
<div class="t" style="left:952.49px;top:176.00px;font-size:12.50px;line-height:12.50px;color:#222;">H</div>
<div class="t" style="left:1233.76px;top:176.00px;font-size:12.50px;line-height:12.50px;color:#222;">I</div>
<div class="t" style="left:1414.88px;top:176.00px;font-size:12.50px;line-height:12.50px;color:#222;">J</div>
<div class="t" style="left:1477.83px;top:176.00px;font-size:12.50px;line-height:12.50px;color:#222;">K</div>
<div class="t" style="left:1542.52px;top:176.00px;font-size:12.50px;line-height:12.50px;color:#222;">L</div>
<div class="t" style="left:7.40px;top:201.00px;font-size:12.50px;line-height:12.50px;color:#222;">1</div>
<div class="t" style="left:7.40px;top:222.00px;font-size:12.50px;line-height:12.50px;color:#222;">2</div>
<div class="t" style="left:7.40px;top:242.00px;font-size:12.50px;line-height:12.50px;color:#222;">3</div>
<div class="t" style="left:7.40px;top:262.00px;font-size:12.50px;line-height:12.50px;color:#222;">4</div>
<div class="t" style="left:7.40px;top:282.00px;font-size:12.50px;line-height:12.50px;color:#222;">5</div>
<div class="t" style="left:7.40px;top:302.00px;font-size:12.50px;line-height:12.50px;color:#222;">6</div>
<div class="t" style="left:7.40px;top:322.00px;font-size:12.50px;line-height:12.50px;color:#222;">7</div>
<div class="t" style="left:7.40px;top:342.00px;font-size:12.50px;line-height:12.50px;color:#222;">8</div>
<div class="b" style="left:0.00px;top:357.00px;width:21.00px;height:19.00px;background:#d2d2d2;"></div>
<div class="b" style="left:21.00px;top:356.00px;width:2.00px;height:21.00px;background:#217346;"></div>
<div class="t" style="left:7.40px;top:362.00px;font-size:12.50px;line-height:12.50px;color:#217346;">9</div>
<div class="t" style="left:4.20px;top:382.00px;font-size:12.50px;line-height:12.50px;color:#222;letter-spacing:-0.551px;">10</div>
<div class="t" style="left:4.20px;top:402.00px;font-size:12.50px;line-height:12.50px;color:#222;letter-spacing:-0.087px;">11</div>
<div class="t" style="left:4.20px;top:422.00px;font-size:12.50px;line-height:12.50px;color:#222;letter-spacing:-0.551px;">12</div>
<div class="t" style="left:4.20px;top:442.00px;font-size:12.50px;line-height:12.50px;color:#222;letter-spacing:-0.551px;">13</div>
<div class="t" style="left:4.20px;top:462.00px;font-size:12.50px;line-height:12.50px;color:#222;letter-spacing:-0.551px;">14</div>
<div class="t" style="left:4.20px;top:482.00px;font-size:12.50px;line-height:12.50px;color:#222;letter-spacing:-0.551px;">15</div>
<div class="t" style="left:4.20px;top:502.00px;font-size:12.50px;line-height:12.50px;color:#222;letter-spacing:-0.551px;">16</div>
<div class="t" style="left:4.20px;top:522.00px;font-size:12.50px;line-height:12.50px;color:#222;letter-spacing:-0.551px;">17</div>
<div class="t" style="left:4.20px;top:542.00px;font-size:12.50px;line-height:12.50px;color:#222;letter-spacing:-0.551px;">18</div>
<div class="t" style="left:4.20px;top:562.00px;font-size:12.50px;line-height:12.50px;color:#222;letter-spacing:-0.551px;">19</div>
<div class="t" style="left:4.20px;top:582.00px;font-size:12.50px;line-height:12.50px;color:#222;letter-spacing:-0.551px;">20</div>
<div class="t" style="left:4.20px;top:602.00px;font-size:12.50px;line-height:12.50px;color:#222;letter-spacing:-0.551px;">21</div>
<div class="t" style="left:4.20px;top:622.00px;font-size:12.50px;line-height:12.50px;color:#222;letter-spacing:-0.551px;">22</div>
<div class="t" style="left:4.20px;top:642.00px;font-size:12.50px;line-height:12.50px;color:#222;letter-spacing:-0.551px;">23</div>
<div class="t" style="left:4.20px;top:662.00px;font-size:12.50px;line-height:12.50px;color:#222;letter-spacing:-0.551px;">24</div>
<div class="t" style="left:4.20px;top:682.00px;font-size:12.50px;line-height:12.50px;color:#222;letter-spacing:-0.551px;">25</div>
<div class="t" style="left:4.20px;top:702.00px;font-size:12.50px;line-height:12.50px;color:#222;letter-spacing:-0.551px;">26</div>
<div class="t" style="left:4.20px;top:722.00px;font-size:12.50px;line-height:12.50px;color:#222;letter-spacing:-0.551px;">27</div>
<div class="t" style="left:4.20px;top:742.00px;font-size:12.50px;line-height:12.50px;color:#222;letter-spacing:-0.551px;">28</div>
<div class="t" style="left:4.20px;top:762.00px;font-size:12.50px;line-height:12.50px;color:#222;letter-spacing:-0.551px;">29</div>
<div class="t" style="left:4.20px;top:782.00px;font-size:12.50px;line-height:12.50px;color:#222;letter-spacing:-0.551px;">30</div>
<div class="t" style="left:4.20px;top:802.00px;font-size:12.50px;line-height:12.50px;color:#222;letter-spacing:-0.551px;">31</div>
<div class="t" style="left:4.20px;top:822.00px;font-size:12.50px;line-height:12.50px;color:#222;letter-spacing:-0.551px;">32</div>
<div class="t" style="left:4.20px;top:842.00px;font-size:12.50px;line-height:12.50px;color:#222;letter-spacing:-0.551px;">33</div>
<div class="t" style="left:4.20px;top:862.00px;font-size:12.50px;line-height:12.50px;color:#222;letter-spacing:-0.551px;">34</div>
<div class="t" style="left:4.20px;top:882.00px;font-size:12.50px;line-height:12.50px;color:#222;letter-spacing:-0.551px;">35</div>
<div class="t" style="left:4.20px;top:902.00px;font-size:12.50px;line-height:12.50px;color:#222;letter-spacing:-0.551px;">36</div>
<div class="t" style="left:4.20px;top:922.00px;font-size:12.50px;line-height:12.50px;color:#222;letter-spacing:-0.551px;">37</div>
<div class="t" style="left:68.60px;top:197.00px;font-size:17.00px;line-height:17.00px;color:#000;letter-spacing:-0.104px;font-weight:bold;">unique ID</div>
<div class="t" style="left:153.50px;top:197.00px;font-size:17.00px;line-height:17.00px;color:#000;letter-spacing:-0.442px;font-weight:bold;">Last name</div>
<div class="t" style="left:261.40px;top:197.00px;font-size:17.00px;line-height:17.00px;color:#000;letter-spacing:-0.167px;font-weight:bold;">First name</div>
<div class="t" style="left:355.20px;top:197.00px;font-size:17.00px;line-height:17.00px;color:#000;letter-spacing:-0.178px;font-weight:bold;">grade</div>
<div class="t" style="left:409.50px;top:197.00px;font-size:17.00px;line-height:17.00px;color:#000;letter-spacing:0.146px;font-weight:bold;">teacher</div>
<div class="t" style="left:593.40px;top:197.00px;font-size:17.00px;line-height:17.00px;color:#000;letter-spacing:0.065px;font-weight:bold;">email 1</div>
<div class="t" style="left:832.60px;top:197.00px;font-size:17.00px;line-height:17.00px;color:#000;letter-spacing:0.151px;font-weight:bold;">email 2</div>
<div class="t" style="left:1088.40px;top:197.00px;font-size:17.00px;line-height:17.00px;color:#000;letter-spacing:-0.411px;font-weight:bold;">Email</div>
<div class="t" style="left:24.50px;top:220.00px;font-size:14.00px;line-height:14.00px;color:#1c1c1c;letter-spacing:-0.741px;">LA030</div>
<div class="t" style="left:105.22px;top:220.00px;font-size:14.00px;line-height:14.00px;color:#1c1c1c;letter-spacing:-0.573px;">103975</div>
<div class="t" style="left:153.00px;top:220.00px;font-size:14.00px;line-height:14.00px;color:#1c1c1c;letter-spacing:0.031px;">Abbate</div>
<div class="t" style="left:261.00px;top:220.00px;font-size:14.00px;line-height:14.00px;color:#1c1c1c;letter-spacing:-0.348px;">Dean</div>
<div class="t" style="left:355.00px;top:220.00px;font-size:14.00px;line-height:14.00px;color:#1c1c1c;letter-spacing:-0.994px;">LA</div>
<div class="t" style="left:409.00px;top:220.00px;font-size:14.00px;line-height:14.00px;color:#1c1c1c;letter-spacing:-0.091px;">Miss Palumbo Little Angels</div>
<div class="t" style="left:593.00px;top:220.00px;font-size:14.00px;line-height:14.00px;color:#1f5fae;letter-spacing:-0.014px;">jaimee.abbate@gmail.com</div>
<div class="b" style="left:593.00px;top:234.00px;width:164.61px;height:1.00px;background:#2a5d96;"></div>
<div class="t" style="left:832.00px;top:220.00px;font-size:14.00px;line-height:14.00px;color:#1f5fae;letter-spacing:-0.051px;">chrisabbate@gmail.com</div>
<div class="b" style="left:832.00px;top:234.00px;width:148.30px;height:1.00px;background:#2a5d96;"></div>
<div class="t" style="left:1088.00px;top:220.00px;font-size:14.00px;line-height:14.00px;color:#1f5fae;letter-spacing:-0.037px;">jaimee.abbate@gmail.com; chrisabbate@gmail.com</div>
<div class="b" style="left:1088.00px;top:234.00px;width:321.40px;height:1.00px;background:#2a5d96;"></div>
<div class="t" style="left:24.50px;top:240.00px;font-size:14.00px;line-height:14.00px;color:#1c1c1c;letter-spacing:-0.741px;">LA039</div>
<div class="t" style="left:105.22px;top:240.00px;font-size:14.00px;line-height:14.00px;color:#1c1c1c;letter-spacing:-0.573px;">103901</div>
<div class="t" style="left:153.00px;top:240.00px;font-size:14.00px;line-height:14.00px;color:#1c1c1c;letter-spacing:-0.027px;">Allbee</div>
<div class="t" style="left:261.00px;top:240.00px;font-size:14.00px;line-height:14.00px;color:#1c1c1c;letter-spacing:-0.218px;">Alana</div>
<div class="t" style="left:355.00px;top:240.00px;font-size:14.00px;line-height:14.00px;color:#1c1c1c;letter-spacing:-0.994px;">LA</div>
<div class="t" style="left:409.00px;top:240.00px;font-size:14.00px;line-height:14.00px;color:#1c1c1c;letter-spacing:-0.091px;">Miss Palumbo Little Angels</div>
<div class="t" style="left:593.00px;top:240.00px;font-size:14.00px;line-height:14.00px;color:#1c1c1c;letter-spacing:-0.020px;">lauralallbee@gmail.com</div>
<div class="t" style="left:832.00px;top:240.00px;font-size:14.00px;line-height:14.00px;color:#1c1c1c;letter-spacing:-0.116px;">gaallbee@gmail.com</div>
<div class="t" style="left:1088.00px;top:240.00px;font-size:14.00px;line-height:14.00px;color:#1f5fae;letter-spacing:-0.067px;">lauralallbee@gmail.com; gaallbee@gmail.com</div>
<div class="b" style="left:1088.00px;top:254.00px;width:284.48px;height:1.00px;background:#2a5d96;"></div>
<div class="t" style="left:24.50px;top:260.00px;font-size:14.00px;line-height:14.00px;color:#1c1c1c;letter-spacing:-0.741px;">LA006</div>
<div class="t" style="left:105.22px;top:260.00px;font-size:14.00px;line-height:14.00px;color:#1c1c1c;letter-spacing:-0.573px;">103929</div>
<div class="t" style="left:153.00px;top:260.00px;font-size:14.00px;line-height:14.00px;color:#1c1c1c;letter-spacing:-0.129px;">Bamrick</div>
<div class="t" style="left:261.00px;top:260.00px;font-size:14.00px;line-height:14.00px;color:#1c1c1c;letter-spacing:-0.242px;">Bode</div>
<div class="t" style="left:355.00px;top:260.00px;font-size:14.00px;line-height:14.00px;color:#1c1c1c;letter-spacing:-0.994px;">LA</div>
<div class="t" style="left:409.00px;top:260.00px;font-size:14.00px;line-height:14.00px;color:#1c1c1c;letter-spacing:-0.091px;">Miss Palumbo Little Angels</div>
<div class="t" style="left:593.00px;top:260.00px;font-size:14.00px;line-height:14.00px;color:#1c1c1c;letter-spacing:0.041px;">bethbamrick@gmail.com</div>
<div class="t" style="left:832.00px;top:260.00px;font-size:14.00px;line-height:14.00px;color:#1c1c1c;letter-spacing:-0.029px;">kyle.bamrick@gmail.com</div>
<div class="t" style="left:1088.00px;top:260.00px;font-size:14.00px;line-height:14.00px;color:#1f5fae;letter-spacing:-0.002px;">bethbamrick@gmail.com; kyle.bamrick@gmail.com</div>
<div class="b" style="left:1088.00px;top:274.00px;width:316.75px;height:1.00px;background:#2a5d96;"></div>
<div class="t" style="left:24.50px;top:280.00px;font-size:14.00px;line-height:14.00px;color:#1c1c1c;letter-spacing:-0.741px;">LA045</div>
<div class="t" style="left:105.22px;top:280.00px;font-size:14.00px;line-height:14.00px;color:#1c1c1c;letter-spacing:-0.573px;">103917</div>
<div class="t" style="left:153.00px;top:280.00px;font-size:14.00px;line-height:14.00px;color:#1c1c1c;letter-spacing:0.047px;">Barlow</div>
<div class="t" style="left:261.00px;top:280.00px;font-size:14.00px;line-height:14.00px;color:#1c1c1c;letter-spacing:-0.401px;">Sloane</div>
<div class="t" style="left:355.00px;top:280.00px;font-size:14.00px;line-height:14.00px;color:#1c1c1c;letter-spacing:-0.994px;">LA</div>
<div class="t" style="left:409.00px;top:280.00px;font-size:14.00px;line-height:14.00px;color:#1c1c1c;letter-spacing:-0.091px;">Miss Palumbo Little Angels</div>
<div class="t" style="left:593.00px;top:280.00px;font-size:14.00px;line-height:14.00px;color:#1c1c1c;letter-spacing:-0.028px;">elysebarlow@gmail.com</div>
<div class="t" style="left:832.00px;top:280.00px;font-size:14.00px;line-height:14.00px;color:#1c1c1c;letter-spacing:-0.006px;">jonathanbarlow3400@gmail.com</div>
<div class="t" style="left:1088.00px;top:280.00px;font-size:14.00px;line-height:14.00px;color:#1f5fae;letter-spacing:-0.020px;">elysebarlow@gmail.com; jonathanbarlow3400@gmail.com</div>
<div class="b" style="left:1088.00px;top:294.00px;width:361.75px;height:1.00px;background:#2a5d96;"></div>
<div class="t" style="left:24.50px;top:300.00px;font-size:14.00px;line-height:14.00px;color:#1c1c1c;letter-spacing:-0.534px;">LA011</div>
<div class="t" style="left:105.22px;top:300.00px;font-size:14.00px;line-height:14.00px;color:#1c1c1c;letter-spacing:-0.573px;">103800</div>
<div class="t" style="left:153.00px;top:300.00px;font-size:14.00px;line-height:14.00px;color:#1c1c1c;letter-spacing:-0.153px;">Braman</div>
<div class="t" style="left:261.00px;top:300.00px;font-size:14.00px;line-height:14.00px;color:#1c1c1c;letter-spacing:0.376px;">Mia</div>
<div class="t" style="left:355.00px;top:300.00px;font-size:14.00px;line-height:14.00px;color:#1c1c1c;letter-spacing:-0.994px;">LA</div>
<div class="t" style="left:409.00px;top:300.00px;font-size:14.00px;line-height:14.00px;color:#1c1c1c;letter-spacing:-0.091px;">Miss Palumbo Little Angels</div>
<div class="t" style="left:593.00px;top:300.00px;font-size:14.00px;line-height:14.00px;color:#1c1c1c;letter-spacing:0.008px;">beth.a.braman@gmail.com</div>
<div class="t" style="left:832.00px;top:300.00px;font-size:14.00px;line-height:14.00px;color:#1c1c1c;letter-spacing:0.047px;">donald.t.braman@gmail.com</div>
<div class="t" style="left:1088.00px;top:300.00px;font-size:14.00px;line-height:14.00px;color:#1f5fae;letter-spacing:0.021px;">beth.a.braman@gmail.com; donald.t.braman@gmail.com</div>
<div class="b" style="left:1088.00px;top:314.00px;width:355.29px;height:1.00px;background:#2a5d96;"></div>
<div class="t" style="left:24.50px;top:320.00px;font-size:14.00px;line-height:14.00px;color:#1c1c1c;letter-spacing:-0.741px;">LA016</div>
<div class="t" style="left:105.22px;top:320.00px;font-size:14.00px;line-height:14.00px;color:#1c1c1c;letter-spacing:-0.573px;">103947</div>
<div class="t" style="left:153.00px;top:320.00px;font-size:14.00px;line-height:14.00px;color:#1c1c1c;letter-spacing:-0.197px;">Charland</div>
<div class="t" style="left:261.00px;top:320.00px;font-size:14.00px;line-height:14.00px;color:#1c1c1c;letter-spacing:-0.303px;">Lila</div>
<div class="t" style="left:355.00px;top:320.00px;font-size:14.00px;line-height:14.00px;color:#1c1c1c;letter-spacing:-0.994px;">LA</div>
<div class="t" style="left:409.00px;top:320.00px;font-size:14.00px;line-height:14.00px;color:#1c1c1c;letter-spacing:-0.091px;">Miss Palumbo Little Angels</div>
<div class="t" style="left:593.00px;top:320.00px;font-size:14.00px;line-height:14.00px;color:#1c1c1c;letter-spacing:-0.198px;">s_charland@yahoo.com</div>
<div class="t" style="left:832.00px;top:320.00px;font-size:14.00px;line-height:14.00px;color:#1c1c1c;letter-spacing:0.035px;">Matthew_charland@yahoo.com</div>
<div class="t" style="left:1088.00px;top:320.00px;font-size:14.00px;line-height:14.00px;color:#1f5fae;letter-spacing:-0.070px;">s_charland@yahoo.com; Matthew_charland@yahoo.com</div>
<div class="b" style="left:1088.00px;top:334.00px;width:351.67px;height:1.00px;background:#2a5d96;"></div>
<div class="t" style="left:24.50px;top:340.00px;font-size:14.00px;line-height:14.00px;color:#1c1c1c;letter-spacing:-0.741px;">LA043</div>
<div class="t" style="left:105.22px;top:340.00px;font-size:14.00px;line-height:14.00px;color:#1c1c1c;letter-spacing:-0.573px;">103915</div>
<div class="t" style="left:153.00px;top:340.00px;font-size:14.00px;line-height:14.00px;color:#1c1c1c;letter-spacing:-0.233px;">Collins</div>
<div class="t" style="left:261.00px;top:340.00px;font-size:14.00px;line-height:14.00px;color:#1c1c1c;letter-spacing:-0.444px;">Logan</div>
<div class="t" style="left:355.00px;top:340.00px;font-size:14.00px;line-height:14.00px;color:#1c1c1c;letter-spacing:-0.994px;">LA</div>
<div class="t" style="left:409.00px;top:340.00px;font-size:14.00px;line-height:14.00px;color:#1c1c1c;letter-spacing:-0.091px;">Miss Palumbo Little Angels</div>
<div class="t" style="left:593.00px;top:340.00px;font-size:14.00px;line-height:14.00px;color:#1c1c1c;letter-spacing:0.029px;">mrsdominiquecollins@gmail.com</div>
<div class="t" style="left:832.00px;top:340.00px;font-size:14.00px;line-height:14.00px;color:#1c1c1c;letter-spacing:-0.110px;">mscollins4@gmail.com</div>
<div class="t" style="left:1088.00px;top:340.00px;font-size:14.00px;line-height:14.00px;color:#1f5fae;letter-spacing:-0.033px;">mrsdominiquecollins@gmail.com; mscollins4@gmail.com</div>
<div class="b" style="left:1088.00px;top:354.00px;width:353.29px;height:1.00px;background:#2a5d96;"></div>
<div class="t" style="left:24.50px;top:360.00px;font-size:14.00px;line-height:14.00px;color:#1c1c1c;letter-spacing:-0.741px;">LA023</div>
<div class="t" style="left:105.22px;top:360.00px;font-size:14.00px;line-height:14.00px;color:#1c1c1c;letter-spacing:-0.573px;">103957</div>
<div class="t" style="left:153.00px;top:360.00px;font-size:14.00px;line-height:14.00px;color:#1c1c1c;letter-spacing:-0.180px;">Cooper</div>
<div class="t" style="left:261.00px;top:360.00px;font-size:14.00px;line-height:14.00px;color:#1c1c1c;letter-spacing:-0.495px;">Lucy</div>
<div class="t" style="left:355.00px;top:360.00px;font-size:14.00px;line-height:14.00px;color:#1c1c1c;letter-spacing:-0.994px;">LA</div>
<div class="t" style="left:409.00px;top:360.00px;font-size:14.00px;line-height:14.00px;color:#1c1c1c;letter-spacing:-0.091px;">Miss Palumbo Little Angels</div>
<div class="t" style="left:593.00px;top:360.00px;font-size:14.00px;line-height:14.00px;color:#1c1c1c;letter-spacing:-0.237px;">AshleyLCooper84@gmail.com</div>
<div class="t" style="left:832.00px;top:360.00px;font-size:14.00px;line-height:14.00px;color:#1c1c1c;letter-spacing:-0.136px;">Travis.Daniel.Cooper@gmail.com</div>
<div class="t" style="left:1088.00px;top:360.00px;font-size:14.00px;line-height:14.00px;color:#1f5fae;letter-spacing:-0.177px;">AshleyLCooper84@gmail.com; Travis.Daniel.Cooper@gmail.com</div>
<div class="b" style="left:1088.00px;top:374.00px;width:394.73px;height:1.00px;background:#2a5d96;"></div>
<div class="t" style="left:24.50px;top:380.00px;font-size:14.00px;line-height:14.00px;color:#1c1c1c;letter-spacing:-0.741px;">LA036</div>
<div class="t" style="left:105.22px;top:380.00px;font-size:14.00px;line-height:14.00px;color:#1c1c1c;letter-spacing:-0.573px;">103895</div>
<div class="t" style="left:153.00px;top:380.00px;font-size:14.00px;line-height:14.00px;color:#1c1c1c;letter-spacing:0.026px;">Deitke</div>
<div class="t" style="left:261.00px;top:380.00px;font-size:14.00px;line-height:14.00px;color:#1c1c1c;letter-spacing:-0.206px;">Stella</div>
<div class="t" style="left:355.00px;top:380.00px;font-size:14.00px;line-height:14.00px;color:#1c1c1c;letter-spacing:-0.994px;">LA</div>
<div class="t" style="left:409.00px;top:380.00px;font-size:14.00px;line-height:14.00px;color:#1c1c1c;letter-spacing:-0.091px;">Miss Palumbo Little Angels</div>
<div class="t" style="left:593.00px;top:380.00px;font-size:14.00px;line-height:14.00px;color:#1c1c1c;letter-spacing:-0.213px;">tpass305@gmail.com</div>
<div class="t" style="left:832.00px;top:380.00px;font-size:14.00px;line-height:14.00px;color:#1c1c1c;letter-spacing:0.018px;">ryan.deitke@gmail.com</div>
<div class="t" style="left:1088.00px;top:380.00px;font-size:14.00px;line-height:14.00px;color:#1f5fae;letter-spacing:-0.091px;">tpass305@gmail.com; ryan.deitke@gmail.com</div>
<div class="b" style="left:1088.00px;top:394.00px;width:284.33px;height:1.00px;background:#2a5d96;"></div>
<div class="t" style="left:24.50px;top:400.00px;font-size:14.00px;line-height:14.00px;color:#1c1c1c;letter-spacing:-0.741px;">LA003</div>
<div class="t" style="left:105.22px;top:400.00px;font-size:14.00px;line-height:14.00px;color:#1c1c1c;letter-spacing:-0.573px;">103923</div>
<div class="t" style="left:153.00px;top:400.00px;font-size:14.00px;line-height:14.00px;color:#1c1c1c;letter-spacing:-0.270px;">DiSandro</div>
<div class="t" style="left:261.00px;top:400.00px;font-size:14.00px;line-height:14.00px;color:#1c1c1c;letter-spacing:-0.064px;">Domenic</div>
<div class="t" style="left:355.00px;top:400.00px;font-size:14.00px;line-height:14.00px;color:#1c1c1c;letter-spacing:-0.994px;">LA</div>
<div class="t" style="left:409.00px;top:400.00px;font-size:14.00px;line-height:14.00px;color:#1c1c1c;letter-spacing:-0.091px;">Miss Palumbo Little Angels</div>
<div class="t" style="left:593.00px;top:400.00px;font-size:14.00px;line-height:14.00px;color:#1c1c1c;letter-spacing:0.036px;">disandrofamily@cox.net</div>
<div class="t" style="left:832.00px;top:400.00px;font-size:14.00px;line-height:14.00px;color:#1c1c1c;letter-spacing:0.036px;">disandrofamily@cox.net</div>
<div class="t" style="left:1088.00px;top:400.00px;font-size:14.00px;line-height:14.00px;color:#1f5fae;letter-spacing:0.028px;">disandrofamily@cox.net; disandrofamily@cox.net</div>
<div class="b" style="left:1088.00px;top:414.00px;width:307.27px;height:1.00px;background:#2a5d96;"></div>
<div class="t" style="left:24.50px;top:420.00px;font-size:14.00px;line-height:14.00px;color:#1c1c1c;letter-spacing:-0.741px;">LA047</div>
<div class="t" style="left:105.22px;top:420.00px;font-size:14.00px;line-height:14.00px;color:#1c1c1c;letter-spacing:-0.573px;">103996</div>
<div class="t" style="left:153.00px;top:420.00px;font-size:14.00px;line-height:14.00px;color:#1c1c1c;letter-spacing:0.060px;">Dufrene</div>
<div class="t" style="left:261.00px;top:420.00px;font-size:14.00px;line-height:14.00px;color:#1c1c1c;letter-spacing:0.062px;">Addieline</div>
<div class="t" style="left:355.00px;top:420.00px;font-size:14.00px;line-height:14.00px;color:#1c1c1c;letter-spacing:-0.994px;">LA</div>
<div class="t" style="left:409.00px;top:420.00px;font-size:14.00px;line-height:14.00px;color:#1c1c1c;letter-spacing:-0.091px;">Miss Palumbo Little Angels</div>
<div class="t" style="left:593.00px;top:420.00px;font-size:14.00px;line-height:14.00px;color:#1c1c1c;letter-spacing:0.048px;">naomi.dufrene@yahoo.com</div>
<div class="t" style="left:832.00px;top:420.00px;font-size:14.00px;line-height:14.00px;color:#1c1c1c;letter-spacing:-0.146px;">Justin.alexander25@yahoo.com</div>
<div class="t" style="left:1088.00px;top:420.00px;font-size:14.00px;line-height:14.00px;color:#1f5fae;letter-spacing:-0.062px;">naomi.dufrene@yahoo.com; Justin.alexander25@yahoo.com</div>
<div class="b" style="left:1088.00px;top:434.00px;width:375.89px;height:1.00px;background:#2a5d96;"></div>
<div class="t" style="left:24.50px;top:440.00px;font-size:14.00px;line-height:14.00px;color:#1c1c1c;letter-spacing:-0.741px;">LA038</div>
<div class="t" style="left:105.22px;top:440.00px;font-size:14.00px;line-height:14.00px;color:#1c1c1c;letter-spacing:-0.573px;">103991</div>
<div class="t" style="left:153.00px;top:440.00px;font-size:14.00px;line-height:14.00px;color:#1c1c1c;letter-spacing:-0.329px;">Fahmy</div>
<div class="t" style="left:261.00px;top:440.00px;font-size:14.00px;line-height:14.00px;color:#1c1c1c;letter-spacing:-0.650px;">Silas</div>
<div class="t" style="left:355.00px;top:440.00px;font-size:14.00px;line-height:14.00px;color:#1c1c1c;letter-spacing:-0.994px;">LA</div>
<div class="t" style="left:409.00px;top:440.00px;font-size:14.00px;line-height:14.00px;color:#1c1c1c;letter-spacing:-0.091px;">Miss Palumbo Little Angels</div>
<div class="t" style="left:593.00px;top:440.00px;font-size:14.00px;line-height:14.00px;color:#1c1c1c;letter-spacing:0.017px;">fabienne.fahmy@gmail.com</div>
<div class="t" style="left:1088.00px;top:440.00px;font-size:14.00px;line-height:14.00px;color:#1f5fae;letter-spacing:0.005px;">fabienne.fahmy@gmail.com; </div>
<div class="b" style="left:1088.00px;top:454.00px;width:180.62px;height:1.00px;background:#2a5d96;"></div>
<div class="t" style="left:24.50px;top:460.00px;font-size:14.00px;line-height:14.00px;color:#1c1c1c;letter-spacing:-0.741px;">LA027</div>
<div class="t" style="left:105.22px;top:460.00px;font-size:14.00px;line-height:14.00px;color:#1c1c1c;letter-spacing:-0.573px;">103967</div>
<div class="t" style="left:153.00px;top:460.00px;font-size:14.00px;line-height:14.00px;color:#1c1c1c;letter-spacing:-0.204px;">Falkenberg</div>
<div class="t" style="left:261.00px;top:460.00px;font-size:14.00px;line-height:14.00px;color:#1c1c1c;letter-spacing:0.022px;">Henrik</div>
<div class="t" style="left:355.00px;top:460.00px;font-size:14.00px;line-height:14.00px;color:#1c1c1c;letter-spacing:-0.994px;">LA</div>
<div class="t" style="left:409.00px;top:460.00px;font-size:14.00px;line-height:14.00px;color:#1c1c1c;letter-spacing:-0.091px;">Miss Palumbo Little Angels</div>
<div class="t" style="left:593.00px;top:460.00px;font-size:14.00px;line-height:14.00px;color:#1c1c1c;letter-spacing:-0.037px;">katiefalkenberg22@gmail.com</div>
<div class="t" style="left:1088.00px;top:460.00px;font-size:14.00px;line-height:14.00px;color:#1f5fae;letter-spacing:-0.045px;">katiefalkenberg22@gmail.com; </div>
<div class="b" style="left:1088.00px;top:474.00px;width:194.00px;height:1.00px;background:#2a5d96;"></div>
<div class="t" style="left:24.50px;top:480.00px;font-size:14.00px;line-height:14.00px;color:#1c1c1c;letter-spacing:-0.741px;">LA014</div>
<div class="t" style="left:105.22px;top:480.00px;font-size:14.00px;line-height:14.00px;color:#1c1c1c;letter-spacing:-0.573px;">103826</div>
<div class="t" style="left:153.00px;top:480.00px;font-size:14.00px;line-height:14.00px;color:#1c1c1c;letter-spacing:-0.321px;">Freye</div>
<div class="t" style="left:261.00px;top:480.00px;font-size:14.00px;line-height:14.00px;color:#1c1c1c;letter-spacing:-0.201px;">Hannah</div>
<div class="t" style="left:355.00px;top:480.00px;font-size:14.00px;line-height:14.00px;color:#1c1c1c;letter-spacing:-0.994px;">LA</div>
<div class="t" style="left:409.00px;top:480.00px;font-size:14.00px;line-height:14.00px;color:#1c1c1c;letter-spacing:-0.091px;">Miss Palumbo Little Angels</div>
<div class="t" style="left:593.00px;top:480.00px;font-size:14.00px;line-height:14.00px;color:#1c1c1c;letter-spacing:0.057px;">karenlafountain@gmail.com</div>
<div class="t" style="left:832.00px;top:480.00px;font-size:14.00px;line-height:14.00px;color:#1c1c1c;letter-spacing:0.018px;">lfreye@gmail.com</div>
<div class="t" style="left:1088.00px;top:480.00px;font-size:14.00px;line-height:14.00px;color:#1f5fae;letter-spacing:0.033px;">karenlafountain@gmail.com; lfreye@gmail.com</div>
<div class="b" style="left:1088.00px;top:494.00px;width:294.17px;height:1.00px;background:#2a5d96;"></div>
<div class="t" style="left:24.50px;top:500.00px;font-size:14.00px;line-height:14.00px;color:#1c1c1c;letter-spacing:-0.741px;">LA001</div>
<div class="t" style="left:105.22px;top:500.00px;font-size:14.00px;line-height:14.00px;color:#1c1c1c;letter-spacing:-0.573px;">103922</div>
<div class="t" style="left:153.00px;top:500.00px;font-size:14.00px;line-height:14.00px;color:#1c1c1c;letter-spacing:-0.130px;">Gallup</div>
<div class="t" style="left:261.00px;top:500.00px;font-size:14.00px;line-height:14.00px;color:#1c1c1c;letter-spacing:0.376px;">Mia</div>
<div class="t" style="left:355.00px;top:500.00px;font-size:14.00px;line-height:14.00px;color:#1c1c1c;letter-spacing:-0.994px;">LA</div>
<div class="t" style="left:409.00px;top:500.00px;font-size:14.00px;line-height:14.00px;color:#1c1c1c;letter-spacing:-0.091px;">Miss Palumbo Little Angels</div>
<div class="t" style="left:593.00px;top:500.00px;font-size:14.00px;line-height:14.00px;color:#1c1c1c;letter-spacing:-0.163px;">saraconnors94@gmail.com</div>
<div class="t" style="left:832.00px;top:500.00px;font-size:14.00px;line-height:14.00px;color:#1c1c1c;letter-spacing:-0.023px;">nick@riengine.com</div>
<div class="t" style="left:1088.00px;top:500.00px;font-size:14.00px;line-height:14.00px;color:#1f5fae;letter-spacing:-0.106px;">saraconnors94@gmail.com; nick@riengine.com</div>
<div class="b" style="left:1088.00px;top:514.00px;width:292.20px;height:1.00px;background:#2a5d96;"></div>
<div class="t" style="left:24.50px;top:520.00px;font-size:14.00px;line-height:14.00px;color:#1c1c1c;letter-spacing:-0.741px;">LA044</div>
<div class="t" style="left:105.22px;top:520.00px;font-size:14.00px;line-height:14.00px;color:#1c1c1c;letter-spacing:-0.573px;">103916</div>
<div class="t" style="left:153.00px;top:520.00px;font-size:14.00px;line-height:14.00px;color:#1c1c1c;letter-spacing:-0.206px;">Green</div>
<div class="t" style="left:261.00px;top:520.00px;font-size:14.00px;line-height:14.00px;color:#1c1c1c;letter-spacing:-0.330px;">Easton</div>
<div class="t" style="left:355.00px;top:520.00px;font-size:14.00px;line-height:14.00px;color:#1c1c1c;letter-spacing:-0.994px;">LA</div>
<div class="t" style="left:409.00px;top:520.00px;font-size:14.00px;line-height:14.00px;color:#1c1c1c;letter-spacing:-0.091px;">Miss Palumbo Little Angels</div>
<div class="t" style="left:593.00px;top:520.00px;font-size:14.00px;line-height:14.00px;color:#1c1c1c;letter-spacing:0.038px;">blbranconnier@gmail.com</div>
<div class="t" style="left:832.00px;top:520.00px;font-size:14.00px;line-height:14.00px;color:#1c1c1c;letter-spacing:-0.165px;">abgreen423@yahoo.com</div>
<div class="t" style="left:1088.00px;top:520.00px;font-size:14.00px;line-height:14.00px;color:#1f5fae;letter-spacing:-0.060px;">blbranconnier@gmail.com; abgreen423@yahoo.com</div>
<div class="b" style="left:1088.00px;top:534.00px;width:324.31px;height:1.00px;background:#2a5d96;"></div>
<div class="t" style="left:24.50px;top:540.00px;font-size:14.00px;line-height:14.00px;color:#1c1c1c;letter-spacing:-0.741px;">LA022</div>
<div class="t" style="left:105.22px;top:540.00px;font-size:14.00px;line-height:14.00px;color:#1c1c1c;letter-spacing:-0.573px;">103861</div>
<div class="t" style="left:153.00px;top:540.00px;font-size:14.00px;line-height:14.00px;color:#1c1c1c;letter-spacing:-0.194px;">LeValley</div>
<div class="t" style="left:261.00px;top:540.00px;font-size:14.00px;line-height:14.00px;color:#1c1c1c;letter-spacing:-0.389px;">Charles</div>
<div class="t" style="left:355.00px;top:540.00px;font-size:14.00px;line-height:14.00px;color:#1c1c1c;letter-spacing:-0.994px;">LA</div>
<div class="t" style="left:409.00px;top:540.00px;font-size:14.00px;line-height:14.00px;color:#1c1c1c;letter-spacing:-0.091px;">Miss Palumbo Little Angels</div>
<div class="t" style="left:593.00px;top:540.00px;font-size:14.00px;line-height:14.00px;color:#1c1c1c;letter-spacing:-0.057px;">kellylevalley2@gmail.com</div>
<div class="t" style="left:832.00px;top:540.00px;font-size:14.00px;line-height:14.00px;color:#1c1c1c;letter-spacing:0.030px;">mattlevalley2@gmail.com</div>
<div class="t" style="left:1088.00px;top:540.00px;font-size:14.00px;line-height:14.00px;color:#1f5fae;letter-spacing:-0.020px;">kellylevalley2@gmail.com; mattlevalley2@gmail.com</div>
<div class="b" style="left:1088.00px;top:554.00px;width:325.99px;height:1.00px;background:#2a5d96;"></div>
<div class="t" style="left:24.50px;top:560.00px;font-size:14.00px;line-height:14.00px;color:#1c1c1c;letter-spacing:-0.741px;">LA012</div>
<div class="t" style="left:105.22px;top:560.00px;font-size:14.00px;line-height:14.00px;color:#1c1c1c;letter-spacing:-0.573px;">103946</div>
<div class="t" style="left:153.00px;top:560.00px;font-size:14.00px;line-height:14.00px;color:#1c1c1c;letter-spacing:-0.323px;">McCabe</div>
<div class="t" style="left:261.00px;top:560.00px;font-size:14.00px;line-height:14.00px;color:#1c1c1c;letter-spacing:-0.040px;">Iris</div>
<div class="t" style="left:355.00px;top:560.00px;font-size:14.00px;line-height:14.00px;color:#1c1c1c;letter-spacing:-0.994px;">LA</div>
<div class="t" style="left:409.00px;top:560.00px;font-size:14.00px;line-height:14.00px;color:#1c1c1c;letter-spacing:-0.091px;">Miss Palumbo Little Angels</div>
<div class="t" style="left:593.00px;top:560.00px;font-size:14.00px;line-height:14.00px;color:#1c1c1c;letter-spacing:-0.079px;">eileen.flanagan4@gmail.com</div>
<div class="t" style="left:832.00px;top:560.00px;font-size:14.00px;line-height:14.00px;color:#1c1c1c;letter-spacing:-0.121px;">colinmccabe17@gmail.com</div>
<div class="t" style="left:1088.00px;top:560.00px;font-size:14.00px;line-height:14.00px;color:#1f5fae;letter-spacing:-0.101px;">eileen.flanagan4@gmail.com; colinmccabe17@gmail.com</div>
<div class="b" style="left:1088.00px;top:574.00px;width:353.78px;height:1.00px;background:#2a5d96;"></div>
<div class="t" style="left:24.50px;top:580.00px;font-size:14.00px;line-height:14.00px;color:#1c1c1c;letter-spacing:-0.741px;">LA042</div>
<div class="t" style="left:105.22px;top:580.00px;font-size:14.00px;line-height:14.00px;color:#1c1c1c;letter-spacing:-0.573px;">103910</div>
<div class="t" style="left:153.00px;top:580.00px;font-size:14.00px;line-height:14.00px;color:#1c1c1c;letter-spacing:-0.065px;">McLaughlin</div>
<div class="t" style="left:261.00px;top:580.00px;font-size:14.00px;line-height:14.00px;color:#1c1c1c;letter-spacing:-0.053px;">Owen</div>
<div class="t" style="left:355.00px;top:580.00px;font-size:14.00px;line-height:14.00px;color:#1c1c1c;letter-spacing:-0.994px;">LA</div>
<div class="t" style="left:409.00px;top:580.00px;font-size:14.00px;line-height:14.00px;color:#1c1c1c;letter-spacing:-0.091px;">Miss Palumbo Little Angels</div>
<div class="t" style="left:593.00px;top:580.00px;font-size:14.00px;line-height:14.00px;color:#1c1c1c;letter-spacing:-0.081px;">dhmcl27@gmail.com</div>
<div class="t" style="left:832.00px;top:580.00px;font-size:14.00px;line-height:14.00px;color:#1c1c1c;letter-spacing:-0.175px;">steveo1781@yahoo.com</div>
<div class="t" style="left:1088.00px;top:580.00px;font-size:14.00px;line-height:14.00px;color:#1f5fae;letter-spacing:-0.133px;">dhmcl27@gmail.com; steveo1781@yahoo.com</div>
<div class="b" style="left:1088.00px;top:594.00px;width:287.59px;height:1.00px;background:#2a5d96;"></div>
<div class="t" style="left:24.50px;top:600.00px;font-size:14.00px;line-height:14.00px;color:#1c1c1c;letter-spacing:-0.741px;">LA009</div>
<div class="t" style="left:105.22px;top:600.00px;font-size:14.00px;line-height:14.00px;color:#1c1c1c;letter-spacing:-0.573px;">103799</div>
<div class="t" style="left:153.00px;top:600.00px;font-size:14.00px;line-height:14.00px;color:#1c1c1c;letter-spacing:-0.096px;">Pagliarini</div>
<div class="t" style="left:261.00px;top:600.00px;font-size:14.00px;line-height:14.00px;color:#1c1c1c;letter-spacing:-0.130px;">Edward</div>
<div class="t" style="left:355.00px;top:600.00px;font-size:14.00px;line-height:14.00px;color:#1c1c1c;letter-spacing:-0.994px;">LA</div>
<div class="t" style="left:409.00px;top:600.00px;font-size:14.00px;line-height:14.00px;color:#1c1c1c;letter-spacing:-0.091px;">Miss Palumbo Little Angels</div>
<div class="t" style="left:593.00px;top:600.00px;font-size:14.00px;line-height:14.00px;color:#1c1c1c;letter-spacing:0.100px;">julia.morini@gmail.com</div>
<div class="t" style="left:832.00px;top:600.00px;font-size:14.00px;line-height:14.00px;color:#1c1c1c;letter-spacing:0.071px;">tom.pagliarini@gmail.com</div>
<div class="t" style="left:1088.00px;top:600.00px;font-size:14.00px;line-height:14.00px;color:#1f5fae;letter-spacing:0.075px;">julia.morini@gmail.com; tom.pagliarini@gmail.com</div>
<div class="b" style="left:1088.00px;top:614.00px;width:316.54px;height:1.00px;background:#2a5d96;"></div>
<div class="t" style="left:24.50px;top:620.00px;font-size:14.00px;line-height:14.00px;color:#1c1c1c;letter-spacing:-0.741px;">LA008</div>
<div class="t" style="left:105.22px;top:620.00px;font-size:14.00px;line-height:14.00px;color:#1c1c1c;letter-spacing:-0.573px;">103935</div>
<div class="t" style="left:153.00px;top:620.00px;font-size:14.00px;line-height:14.00px;color:#1c1c1c;letter-spacing:-0.418px;">Pearce</div>
<div class="t" style="left:261.00px;top:620.00px;font-size:14.00px;line-height:14.00px;color:#1c1c1c;letter-spacing:0.376px;">Mia</div>
<div class="t" style="left:355.00px;top:620.00px;font-size:14.00px;line-height:14.00px;color:#1c1c1c;letter-spacing:-0.994px;">LA</div>
<div class="t" style="left:409.00px;top:620.00px;font-size:14.00px;line-height:14.00px;color:#1c1c1c;letter-spacing:-0.091px;">Miss Palumbo Little Angels</div>
<div class="t" style="left:593.00px;top:620.00px;font-size:14.00px;line-height:14.00px;color:#1c1c1c;letter-spacing:-0.010px;">lfredman12@gmail.com</div>
<div class="t" style="left:832.00px;top:620.00px;font-size:14.00px;line-height:14.00px;color:#1c1c1c;letter-spacing:-0.126px;">Bmpearce@gmail.com</div>
<div class="t" style="left:1088.00px;top:620.00px;font-size:14.00px;line-height:14.00px;color:#1f5fae;letter-spacing:-0.069px;">lfredman12@gmail.com; Bmpearce@gmail.com</div>
<div class="b" style="left:1088.00px;top:634.00px;width:293.84px;height:1.00px;background:#2a5d96;"></div>
<div class="t" style="left:24.50px;top:640.00px;font-size:14.00px;line-height:14.00px;color:#1c1c1c;letter-spacing:-0.741px;">LA021</div>
<div class="t" style="left:105.22px;top:640.00px;font-size:14.00px;line-height:14.00px;color:#1c1c1c;letter-spacing:-0.573px;">103953</div>
<div class="t" style="left:153.00px;top:640.00px;font-size:14.00px;line-height:14.00px;color:#1c1c1c;letter-spacing:0.080px;">Stewart</div>
<div class="t" style="left:261.00px;top:640.00px;font-size:14.00px;line-height:14.00px;color:#1c1c1c;letter-spacing:-0.045px;">Vivian</div>
<div class="t" style="left:355.00px;top:640.00px;font-size:14.00px;line-height:14.00px;color:#1c1c1c;letter-spacing:-0.994px;">LA</div>
<div class="t" style="left:409.00px;top:640.00px;font-size:14.00px;line-height:14.00px;color:#1c1c1c;letter-spacing:-0.091px;">Miss Palumbo Little Angels</div>
<div class="t" style="left:593.00px;top:640.00px;font-size:14.00px;line-height:14.00px;color:#1c1c1c;letter-spacing:0.091px;">hmorini@gmail.com</div>
<div class="t" style="left:832.00px;top:640.00px;font-size:14.00px;line-height:14.00px;color:#1c1c1c;letter-spacing:-0.081px;">fsri21@gmail.com</div>
<div class="t" style="left:1088.00px;top:640.00px;font-size:14.00px;line-height:14.00px;color:#1f5fae;letter-spacing:-0.001px;">hmorini@gmail.com; fsri21@gmail.com</div>
<div class="b" style="left:1088.00px;top:654.00px;width:242.87px;height:1.00px;background:#2a5d96;"></div>
<div class="t" style="left:24.50px;top:660.00px;font-size:14.00px;line-height:14.00px;color:#1c1c1c;letter-spacing:-0.741px;">LA020</div>
<div class="t" style="left:105.22px;top:660.00px;font-size:14.00px;line-height:14.00px;color:#1c1c1c;letter-spacing:-0.573px;">103952</div>
<div class="t" style="left:153.00px;top:660.00px;font-size:14.00px;line-height:14.00px;color:#1c1c1c;letter-spacing:0.001px;">Vallee</div>
<div class="t" style="left:261.00px;top:660.00px;font-size:14.00px;line-height:14.00px;color:#1c1c1c;letter-spacing:0.027px;">Brooklyn</div>
<div class="t" style="left:355.00px;top:660.00px;font-size:14.00px;line-height:14.00px;color:#1c1c1c;letter-spacing:-0.994px;">LA</div>
<div class="t" style="left:409.00px;top:660.00px;font-size:14.00px;line-height:14.00px;color:#1c1c1c;letter-spacing:-0.091px;">Miss Palumbo Little Angels</div>
<div class="t" style="left:593.00px;top:660.00px;font-size:14.00px;line-height:14.00px;color:#1c1c1c;letter-spacing:-0.141px;">kjl0716@yahoo.com</div>
<div class="t" style="left:832.00px;top:660.00px;font-size:14.00px;line-height:14.00px;color:#1c1c1c;letter-spacing:-0.175px;">goldenlexus6093@yahoo.com</div>
<div class="t" style="left:1088.00px;top:660.00px;font-size:14.00px;line-height:14.00px;color:#1f5fae;letter-spacing:-0.161px;">kjl0716@yahoo.com; goldenlexus6093@yahoo.com</div>
<div class="b" style="left:1088.00px;top:674.00px;width:315.32px;height:1.00px;background:#2a5d96;"></div>
<div class="t" style="left:24.50px;top:680.00px;font-size:14.00px;line-height:14.00px;color:#1c1c1c;letter-spacing:-0.741px;">LA041</div>
<div class="t" style="left:105.22px;top:680.00px;font-size:14.00px;line-height:14.00px;color:#1c1c1c;letter-spacing:-0.573px;">103903</div>
<div class="t" style="left:153.00px;top:680.00px;font-size:14.00px;line-height:14.00px;color:#1c1c1c;letter-spacing:-0.055px;">Wallace</div>
<div class="t" style="left:261.00px;top:680.00px;font-size:14.00px;line-height:14.00px;color:#1c1c1c;letter-spacing:0.349px;">Torin</div>
<div class="t" style="left:355.00px;top:680.00px;font-size:14.00px;line-height:14.00px;color:#1c1c1c;letter-spacing:-0.994px;">LA</div>
<div class="t" style="left:409.00px;top:680.00px;font-size:14.00px;line-height:14.00px;color:#1c1c1c;letter-spacing:-0.091px;">Miss Palumbo Little Angels</div>
<div class="t" style="left:593.00px;top:680.00px;font-size:14.00px;line-height:14.00px;color:#1c1c1c;letter-spacing:-0.126px;">lexaoski@gmail.com</div>
<div class="t" style="left:832.00px;top:680.00px;font-size:14.00px;line-height:14.00px;color:#1c1c1c;letter-spacing:0.010px;">captainconnor@gmail.com</div>
<div class="t" style="left:1088.00px;top:680.00px;font-size:14.00px;line-height:14.00px;color:#1f5fae;letter-spacing:-0.054px;">lexaoski@gmail.com; captainconnor@gmail.com</div>
<div class="b" style="left:1088.00px;top:694.00px;width:298.98px;height:1.00px;background:#2a5d96;"></div>
<div class="t" style="left:24.50px;top:700.00px;font-size:14.00px;line-height:14.00px;color:#1c1c1c;letter-spacing:-0.741px;">LA025</div>
<div class="t" style="left:105.22px;top:700.00px;font-size:14.00px;line-height:14.00px;color:#1c1c1c;letter-spacing:-0.573px;">103962</div>
<div class="t" style="left:153.00px;top:700.00px;font-size:14.00px;line-height:14.00px;color:#1c1c1c;letter-spacing:0.050px;">Wilson</div>
<div class="t" style="left:261.00px;top:700.00px;font-size:14.00px;line-height:14.00px;color:#1c1c1c;letter-spacing:-0.029px;">Amelia</div>
<div class="t" style="left:355.00px;top:700.00px;font-size:14.00px;line-height:14.00px;color:#1c1c1c;letter-spacing:-0.994px;">LA</div>
<div class="t" style="left:409.00px;top:700.00px;font-size:14.00px;line-height:14.00px;color:#1c1c1c;letter-spacing:-0.091px;">Miss Palumbo Little Angels</div>
<div class="t" style="left:593.00px;top:700.00px;font-size:14.00px;line-height:14.00px;color:#1c1c1c;letter-spacing:0.023px;">gabbi.t.wilson@gmail.com</div>
<div class="t" style="left:832.00px;top:700.00px;font-size:14.00px;line-height:14.00px;color:#1c1c1c;letter-spacing:-0.097px;">adamswilson2@gmail.com</div>
<div class="t" style="left:1088.00px;top:700.00px;font-size:14.00px;line-height:14.00px;color:#1f5fae;letter-spacing:-0.039px;">gabbi.t.wilson@gmail.com; adamswilson2@gmail.com</div>
<div class="b" style="left:1088.00px;top:714.00px;width:334.43px;height:1.00px;background:#2a5d96;"></div>
<div class="t" style="left:24.50px;top:720.00px;font-size:14.00px;line-height:14.00px;color:#1c1c1c;letter-spacing:-0.761px;">P3002</div>
<div class="t" style="left:105.22px;top:720.00px;font-size:14.00px;line-height:14.00px;color:#1c1c1c;letter-spacing:-0.573px;">103827</div>
<div class="t" style="left:153.00px;top:720.00px;font-size:14.00px;line-height:14.00px;color:#1c1c1c;letter-spacing:-0.312px;">Adams</div>
<div class="t" style="left:261.00px;top:720.00px;font-size:14.00px;line-height:14.00px;color:#1c1c1c;letter-spacing:0.334px;">Milan</div>
<div class="t" style="left:355.00px;top:720.00px;font-size:14.00px;line-height:14.00px;color:#1c1c1c;letter-spacing:-1.042px;">P3</div>
<div class="t" style="left:409.00px;top:720.00px;font-size:14.00px;line-height:14.00px;color:#1c1c1c;letter-spacing:-0.197px;">Mrs. Wray Pre-K 3</div>
<div class="t" style="left:593.00px;top:720.00px;font-size:14.00px;line-height:14.00px;color:#1c1c1c;letter-spacing:-0.092px;">tmadams2110@gmail.com</div>
<div class="t" style="left:832.00px;top:720.00px;font-size:14.00px;line-height:14.00px;color:#1c1c1c;letter-spacing:-0.149px;">meadams4@gmail.com</div>
<div class="t" style="left:1088.00px;top:720.00px;font-size:14.00px;line-height:14.00px;color:#1f5fae;letter-spacing:-0.120px;">tmadams2110@gmail.com; meadams4@gmail.com</div>
<div class="b" style="left:1088.00px;top:734.00px;width:314.78px;height:1.00px;background:#2a5d96;"></div>
<div class="t" style="left:24.50px;top:740.00px;font-size:14.00px;line-height:14.00px;color:#1c1c1c;letter-spacing:-0.761px;">P3028</div>
<div class="t" style="left:105.22px;top:740.00px;font-size:14.00px;line-height:14.00px;color:#1c1c1c;letter-spacing:-0.573px;">104004</div>
<div class="t" style="left:153.00px;top:740.00px;font-size:14.00px;line-height:14.00px;color:#1c1c1c;letter-spacing:-0.223px;">Ball</div>
<div class="t" style="left:261.00px;top:740.00px;font-size:14.00px;line-height:14.00px;color:#1c1c1c;letter-spacing:0.310px;">Mary</div>
<div class="t" style="left:355.00px;top:740.00px;font-size:14.00px;line-height:14.00px;color:#1c1c1c;letter-spacing:-1.042px;">P3</div>
<div class="t" style="left:409.00px;top:740.00px;font-size:14.00px;line-height:14.00px;color:#1c1c1c;letter-spacing:-0.197px;">Mrs. Wray Pre-K 3</div>
<div class="t" style="left:593.00px;top:740.00px;font-size:14.00px;line-height:14.00px;color:#1c1c1c;letter-spacing:-0.053px;">sfontes@gmail.com</div>
<div class="t" style="left:1088.00px;top:740.00px;font-size:14.00px;line-height:14.00px;color:#1f5fae;letter-spacing:-0.063px;">sfontes@gmail.com; </div>
<div class="b" style="left:1088.00px;top:754.00px;width:128.72px;height:1.00px;background:#2a5d96;"></div>
<div class="t" style="left:24.50px;top:760.00px;font-size:14.00px;line-height:14.00px;color:#1c1c1c;letter-spacing:-0.761px;">P3004</div>
<div class="t" style="left:105.22px;top:760.00px;font-size:14.00px;line-height:14.00px;color:#1c1c1c;letter-spacing:-0.573px;">103739</div>
<div class="t" style="left:153.00px;top:760.00px;font-size:14.00px;line-height:14.00px;color:#1c1c1c;letter-spacing:0.047px;">Barlow</div>
<div class="t" style="left:261.00px;top:760.00px;font-size:14.00px;line-height:14.00px;color:#1c1c1c;letter-spacing:-0.591px;">Luca</div>
<div class="t" style="left:355.00px;top:760.00px;font-size:14.00px;line-height:14.00px;color:#1c1c1c;letter-spacing:-1.042px;">P3</div>
<div class="t" style="left:409.00px;top:760.00px;font-size:14.00px;line-height:14.00px;color:#1c1c1c;letter-spacing:-0.197px;">Mrs. Wray Pre-K 3</div>
<div class="t" style="left:593.00px;top:760.00px;font-size:14.00px;line-height:14.00px;color:#1c1c1c;letter-spacing:-0.028px;">elysebarlow@gmail.com</div>
<div class="t" style="left:832.00px;top:760.00px;font-size:14.00px;line-height:14.00px;color:#1c1c1c;letter-spacing:-0.006px;">jonathanbarlow3400@gmail.com</div>
<div class="t" style="left:1088.00px;top:760.00px;font-size:14.00px;line-height:14.00px;color:#1f5fae;letter-spacing:-0.020px;">elysebarlow@gmail.com; jonathanbarlow3400@gmail.com</div>
<div class="b" style="left:1088.00px;top:774.00px;width:361.75px;height:1.00px;background:#2a5d96;"></div>
<div class="t" style="left:24.50px;top:780.00px;font-size:14.00px;line-height:14.00px;color:#1c1c1c;letter-spacing:-0.761px;">P3006</div>
<div class="t" style="left:105.22px;top:780.00px;font-size:14.00px;line-height:14.00px;color:#1c1c1c;letter-spacing:-0.573px;">103612</div>
<div class="t" style="left:153.00px;top:780.00px;font-size:14.00px;line-height:14.00px;color:#1c1c1c;letter-spacing:-0.233px;">Collins</div>
<div class="t" style="left:261.00px;top:780.00px;font-size:14.00px;line-height:14.00px;color:#1c1c1c;letter-spacing:0.086px;">Aurora</div>
<div class="t" style="left:355.00px;top:780.00px;font-size:14.00px;line-height:14.00px;color:#1c1c1c;letter-spacing:-1.042px;">P3</div>
<div class="t" style="left:409.00px;top:780.00px;font-size:14.00px;line-height:14.00px;color:#1c1c1c;letter-spacing:-0.197px;">Mrs. Wray Pre-K 3</div>
<div class="t" style="left:593.00px;top:780.00px;font-size:14.00px;line-height:14.00px;color:#1c1c1c;letter-spacing:0.029px;">mrsdominiquecollins@gmail.com</div>
<div class="t" style="left:832.00px;top:780.00px;font-size:14.00px;line-height:14.00px;color:#1c1c1c;letter-spacing:-0.110px;">mscollins4@gmail.com</div>
<div class="t" style="left:1088.00px;top:780.00px;font-size:14.00px;line-height:14.00px;color:#1f5fae;letter-spacing:-0.033px;">mrsdominiquecollins@gmail.com; mscollins4@gmail.com</div>
<div class="b" style="left:1088.00px;top:794.00px;width:353.29px;height:1.00px;background:#2a5d96;"></div>
<div class="t" style="left:24.50px;top:800.00px;font-size:14.00px;line-height:14.00px;color:#1c1c1c;letter-spacing:-0.761px;">P3010</div>
<div class="t" style="left:105.22px;top:800.00px;font-size:14.00px;line-height:14.00px;color:#1c1c1c;letter-spacing:-0.573px;">103617</div>
<div class="t" style="left:153.00px;top:800.00px;font-size:14.00px;line-height:14.00px;color:#1c1c1c;letter-spacing:-0.164px;">Fiorenzano</div>
<div class="t" style="left:261.00px;top:800.00px;font-size:14.00px;line-height:14.00px;color:#1c1c1c;letter-spacing:-0.364px;">Levi</div>
<div class="t" style="left:355.00px;top:800.00px;font-size:14.00px;line-height:14.00px;color:#1c1c1c;letter-spacing:-1.042px;">P3</div>
<div class="t" style="left:409.00px;top:800.00px;font-size:14.00px;line-height:14.00px;color:#1c1c1c;letter-spacing:-0.197px;">Mrs. Wray Pre-K 3</div>
<div class="t" style="left:593.00px;top:800.00px;font-size:14.00px;line-height:14.00px;color:#1c1c1c;letter-spacing:-0.040px;">Jordan.bruni@gmail.com</div>
<div class="t" style="left:832.00px;top:800.00px;font-size:14.00px;line-height:14.00px;color:#1c1c1c;letter-spacing:-0.005px;">louis.fiorenzano@gmail.com</div>
<div class="t" style="left:1088.00px;top:800.00px;font-size:14.00px;line-height:14.00px;color:#1f5fae;letter-spacing:-0.026px;">Jordan.bruni@gmail.com; louis.fiorenzano@gmail.com</div>
<div class="b" style="left:1088.00px;top:814.00px;width:337.35px;height:1.00px;background:#2a5d96;"></div>
<div class="t" style="left:24.50px;top:820.00px;font-size:14.00px;line-height:14.00px;color:#1c1c1c;letter-spacing:-0.761px;">P3013</div>
<div class="t" style="left:105.22px;top:820.00px;font-size:14.00px;line-height:14.00px;color:#1c1c1c;letter-spacing:-0.573px;">103619</div>
<div class="t" style="left:153.00px;top:820.00px;font-size:14.00px;line-height:14.00px;color:#1c1c1c;letter-spacing:-0.253px;">Frazier</div>
<div class="t" style="left:261.00px;top:820.00px;font-size:14.00px;line-height:14.00px;color:#1c1c1c;letter-spacing:0.028px;">Norah</div>
<div class="t" style="left:355.00px;top:820.00px;font-size:14.00px;line-height:14.00px;color:#1c1c1c;letter-spacing:-1.042px;">P3</div>
<div class="t" style="left:409.00px;top:820.00px;font-size:14.00px;line-height:14.00px;color:#1c1c1c;letter-spacing:-0.197px;">Mrs. Wray Pre-K 3</div>
<div class="t" style="left:593.00px;top:820.00px;font-size:14.00px;line-height:14.00px;color:#1c1c1c;letter-spacing:-0.067px;">lisa@matherpage.com</div>
<div class="t" style="left:832.00px;top:820.00px;font-size:14.00px;line-height:14.00px;color:#1c1c1c;letter-spacing:0.010px;">steven@frazierim.com</div>
<div class="t" style="left:1088.00px;top:820.00px;font-size:14.00px;line-height:14.00px;color:#1f5fae;letter-spacing:-0.033px;">lisa@matherpage.com; steven@frazierim.com</div>
<div class="b" style="left:1088.00px;top:834.00px;width:285.14px;height:1.00px;background:#2a5d96;"></div>
<div class="t" style="left:24.50px;top:840.00px;font-size:14.00px;line-height:14.00px;color:#1c1c1c;letter-spacing:-0.761px;">P3014</div>
<div class="t" style="left:105.22px;top:840.00px;font-size:14.00px;line-height:14.00px;color:#1c1c1c;letter-spacing:-0.573px;">103852</div>
<div class="t" style="left:153.00px;top:840.00px;font-size:14.00px;line-height:14.00px;color:#1c1c1c;letter-spacing:-0.070px;">Gorman</div>
<div class="t" style="left:261.00px;top:840.00px;font-size:14.00px;line-height:14.00px;color:#1c1c1c;letter-spacing:-0.206px;">Lydia</div>
<div class="t" style="left:355.00px;top:840.00px;font-size:14.00px;line-height:14.00px;color:#1c1c1c;letter-spacing:-1.042px;">P3</div>
<div class="t" style="left:409.00px;top:840.00px;font-size:14.00px;line-height:14.00px;color:#1c1c1c;letter-spacing:-0.197px;">Mrs. Wray Pre-K 3</div>
<div class="t" style="left:593.00px;top:840.00px;font-size:14.00px;line-height:14.00px;color:#1c1c1c;letter-spacing:-0.157px;">smgorman1216@gmail.com</div>
<div class="t" style="left:832.00px;top:840.00px;font-size:14.00px;line-height:14.00px;color:#1c1c1c;letter-spacing:0.012px;">wrgorman1@gmail.com</div>
<div class="t" style="left:1088.00px;top:840.00px;font-size:14.00px;line-height:14.00px;color:#1f5fae;letter-spacing:-0.082px;">smgorman1216@gmail.com; wrgorman1@gmail.com</div>
<div class="b" style="left:1088.00px;top:854.00px;width:326.54px;height:1.00px;background:#2a5d96;"></div>
<div class="t" style="left:24.50px;top:860.00px;font-size:14.00px;line-height:14.00px;color:#1c1c1c;letter-spacing:-0.761px;">P3027</div>
<div class="t" style="left:105.22px;top:860.00px;font-size:14.00px;line-height:14.00px;color:#1c1c1c;letter-spacing:-0.573px;">104002</div>
<div class="t" style="left:153.00px;top:860.00px;font-size:14.00px;line-height:14.00px;color:#1c1c1c;letter-spacing:-0.127px;">Greenberg</div>
<div class="t" style="left:261.00px;top:860.00px;font-size:14.00px;line-height:14.00px;color:#1c1c1c;letter-spacing:0.015px;">Oliver</div>
<div class="t" style="left:355.00px;top:860.00px;font-size:14.00px;line-height:14.00px;color:#1c1c1c;letter-spacing:-1.042px;">P3</div>
<div class="t" style="left:409.00px;top:860.00px;font-size:14.00px;line-height:14.00px;color:#1c1c1c;letter-spacing:-0.197px;">Mrs. Wray Pre-K 3</div>
<div class="t" style="left:593.00px;top:860.00px;font-size:14.00px;line-height:14.00px;color:#1c1c1c;letter-spacing:-0.007px;">niannuccillo@gmail.com</div>
<div class="t" style="left:832.00px;top:860.00px;font-size:14.00px;line-height:14.00px;color:#1c1c1c;letter-spacing:-0.190px;">ryang6037@gmail.com</div>
<div class="t" style="left:1088.00px;top:860.00px;font-size:14.00px;line-height:14.00px;color:#1f5fae;letter-spacing:-0.094px;">niannuccillo@gmail.com; ryang6037@gmail.com</div>
<div class="b" style="left:1088.00px;top:874.00px;width:298.03px;height:1.00px;background:#2a5d96;"></div>
<div class="t" style="left:24.50px;top:880.00px;font-size:14.00px;line-height:14.00px;color:#1c1c1c;letter-spacing:-0.761px;">P3015</div>
<div class="t" style="left:105.22px;top:880.00px;font-size:14.00px;line-height:14.00px;color:#1c1c1c;letter-spacing:-0.573px;">103798</div>
<div class="t" style="left:153.00px;top:880.00px;font-size:14.00px;line-height:14.00px;color:#1c1c1c;letter-spacing:-0.089px;">Kent</div>
<div class="t" style="left:261.00px;top:880.00px;font-size:14.00px;line-height:14.00px;color:#1c1c1c;letter-spacing:0.103px;">Charlotte</div>
<div class="t" style="left:355.00px;top:880.00px;font-size:14.00px;line-height:14.00px;color:#1c1c1c;letter-spacing:-1.042px;">P3</div>
<div class="t" style="left:409.00px;top:880.00px;font-size:14.00px;line-height:14.00px;color:#1c1c1c;letter-spacing:-0.197px;">Mrs. Wray Pre-K 3</div>
<div class="t" style="left:593.00px;top:880.00px;font-size:14.00px;line-height:14.00px;color:#1c1c1c;letter-spacing:0.012px;">Kristenlynnekelliher@gmail.com</div>
<div class="t" style="left:1088.00px;top:880.00px;font-size:14.00px;line-height:14.00px;color:#1f5fae;letter-spacing:0.002px;">Kristenlynnekelliher@gmail.com; </div>
<div class="b" style="left:1088.00px;top:894.00px;width:206.24px;height:1.00px;background:#2a5d96;"></div>
<div class="t" style="left:24.50px;top:900.00px;font-size:14.00px;line-height:14.00px;color:#1c1c1c;letter-spacing:-0.761px;">P3029</div>
<div class="t" style="left:105.22px;top:900.00px;font-size:14.00px;line-height:14.00px;color:#1c1c1c;letter-spacing:-0.573px;">104009</div>
<div class="t" style="left:153.00px;top:900.00px;font-size:14.00px;line-height:14.00px;color:#1c1c1c;letter-spacing:-0.003px;">McCarthy</div>
<div class="t" style="left:261.00px;top:900.00px;font-size:14.00px;line-height:14.00px;color:#1c1c1c;letter-spacing:-0.161px;">Campbell</div>
<div class="t" style="left:355.00px;top:900.00px;font-size:14.00px;line-height:14.00px;color:#1c1c1c;letter-spacing:-1.042px;">P3</div>
<div class="t" style="left:409.00px;top:900.00px;font-size:14.00px;line-height:14.00px;color:#1c1c1c;letter-spacing:-0.197px;">Mrs. Wray Pre-K 3</div>
<div class="t" style="left:593.00px;top:900.00px;font-size:14.00px;line-height:14.00px;color:#1c1c1c;letter-spacing:-0.124px;">sokol.sarah@gmail.com</div>
<div class="t" style="left:832.00px;top:900.00px;font-size:14.00px;line-height:14.00px;color:#1c1c1c;letter-spacing:-0.022px;">bryancmccarthy@gmail.com</div>
<div class="t" style="left:1088.00px;top:900.00px;font-size:14.00px;line-height:14.00px;color:#1f5fae;letter-spacing:-0.073px;">sokol.sarah@gmail.com; bryancmccarthy@gmail.com</div>
<div class="b" style="left:1088.00px;top:914.00px;width:329.73px;height:1.00px;background:#2a5d96;"></div>
<div class="t" style="left:24.50px;top:920.00px;font-size:14.00px;line-height:14.00px;color:#1c1c1c;letter-spacing:-0.761px;">P3017</div>
<div class="t" style="left:105.22px;top:920.00px;font-size:14.00px;line-height:14.00px;color:#1c1c1c;letter-spacing:-0.573px;">103749</div>
<div class="t" style="left:153.00px;top:920.00px;font-size:14.00px;line-height:14.00px;color:#1c1c1c;letter-spacing:-0.087px;">McPhie</div>
<div class="t" style="left:261.00px;top:920.00px;font-size:14.00px;line-height:14.00px;color:#1c1c1c;letter-spacing:-0.297px;">Grayson</div>
<div class="t" style="left:355.00px;top:920.00px;font-size:14.00px;line-height:14.00px;color:#1c1c1c;letter-spacing:-1.042px;">P3</div>
<div class="t" style="left:409.00px;top:920.00px;font-size:14.00px;line-height:14.00px;color:#1c1c1c;letter-spacing:-0.197px;">Mrs. Wray Pre-K 3</div>
<div class="t" style="left:593.00px;top:920.00px;font-size:14.00px;line-height:14.00px;color:#1c1c1c;letter-spacing:0.003px;">michelle.mcphie@gmail.com</div>
<div class="t" style="left:832.00px;top:920.00px;font-size:14.00px;line-height:14.00px;color:#1c1c1c;letter-spacing:0.090px;">mattmcphie@gmail.com</div>
<div class="t" style="left:1088.00px;top:920.00px;font-size:14.00px;line-height:14.00px;color:#1f5fae;letter-spacing:0.034px;">michelle.mcphie@gmail.com; mattmcphie@gmail.com</div>
<div class="b" style="left:1088.00px;top:934.00px;width:337.09px;height:1.00px;background:#2a5d96;"></div>
</div></body></html>
